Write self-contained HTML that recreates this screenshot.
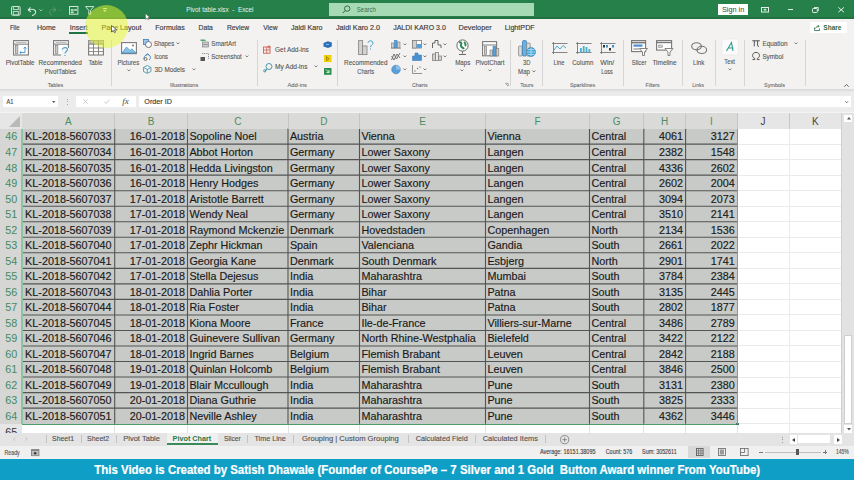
<!DOCTYPE html><html><head><meta charset="utf-8"><style>
*{margin:0;padding:0;box-sizing:border-box}
html,body{width:854px;height:480px;overflow:hidden;background:#f3f3f3;font-family:"Liberation Sans",sans-serif}
body{position:relative}
div{position:absolute}
.t{position:absolute;white-space:nowrap;line-height:1}
svg{position:absolute;overflow:visible}
</style></head><body>
<div style="position:absolute;left:0.00px;top:0.00px;width:854.00px;height:18.60px;background:#26804a"></div>
<div style="position:absolute;left:0.00px;top:16.60px;width:854.00px;height:2.00px;background:#227140"></div>
<svg style="left:10.80px;top:5.60px" width="10" height="10" viewBox="0 0 10 10"><rect x="0.5" y="0.5" width="8.6" height="8.6" rx="0.8" fill="none" stroke="#cfe6d6" stroke-width="1"/><rect x="2.3" y="0.6" width="5" height="3" fill="none" stroke="#cfe6d6" stroke-width="0.9"/><rect x="2.3" y="5.6" width="5" height="3.4" fill="none" stroke="#cfe6d6" stroke-width="0.9"/></svg>
<svg style="left:26.70px;top:5.50px" width="10" height="10" viewBox="0 0 10 10"><path d="M1 4 L3.5 1.3 M1 4 L4 5.8 M1.3 4 C5 2.5 9 3.5 8.6 6.5 C8.3 8.5 6.5 9.3 5 9.6" fill="none" stroke="#cfe6d6" stroke-width="1.1"/></svg>
<svg style="left:38.80px;top:8.70px" width="3.6" height="2.6" viewBox="0 0 3.6 2.6"><path d="M0.5 0.52 L1.80 1.82 L3.10 0.52" fill="none" stroke="#cfe6d6" stroke-width="0.9"/></svg>
<svg style="left:49.00px;top:5.80px" width="8" height="9" viewBox="0 0 8 9"><path d="M7 4 L4.5 1.3 M7 4 L4 5.8 M6.7 4 C3 2.5 0.5 4 0.8 6.5 C1 8.3 2 8.8 3 9" fill="none" stroke="#5a9a70" stroke-width="1"/></svg>
<svg style="left:58.80px;top:8.80px" width="3.4" height="2.4" viewBox="0 0 3.4 2.4"><path d="M0.5 0.48 L1.70 1.68 L2.90 0.48" fill="none" stroke="#4f8f66" stroke-width="0.9"/></svg>
<svg style="left:69.10px;top:5.90px" width="9.4" height="8.7" viewBox="0 0 9.4 8.7"><rect x="0.5" y="0.5" width="8.4" height="7.7" fill="none" stroke="#cfe6d6" stroke-width="1"/><rect x="1.8" y="3.2" width="2.8" height="1.6" fill="#cfe6d6"/><rect x="5.2" y="3.2" width="2.6" height="1.6" fill="#cfe6d6"/><rect x="1.8" y="5.5" width="2.8" height="1.6" fill="#cfe6d6"/></svg>
<svg style="left:84.60px;top:5.90px" width="9.4" height="8.7" viewBox="0 0 9.4 8.7"><path d="M0.6 0.6 L8.8 0.6 L5.6 4.4 L5.6 8.2 L3.8 8.2 L3.8 4.4 Z" fill="none" stroke="#cfe6d6" stroke-width="1"/></svg>
<div style="position:absolute;left:102.80px;top:7.60px;width:4.00px;height:0.80px;background:#cfe6d6"></div>
<svg style="left:103.00px;top:10.00px" width="3.6" height="2" viewBox="0 0 3.6 2"><path d="M0 0 H3.6 L1.8 2 Z" fill="#cfe6d6"/></svg>
<div style="position:absolute;left:329.00px;top:2.60px;width:205.00px;height:13.80px;background:#a6dab5"></div>
<svg style="left:341.50px;top:5.20px" width="9" height="9" viewBox="0 0 9 9"><circle cx="5.2" cy="3.6" r="2.7" fill="none" stroke="#2d5e3c" stroke-width="0.9"/><path d="M3.2 5.6 L0.8 8" stroke="#2d5e3c" stroke-width="1"/></svg>
<div style="position:absolute;left:718.00px;top:4.10px;width:30.30px;height:10.50px;background:#fff"></div>
<svg style="left:761.00px;top:7.00px" width="8" height="5.5" viewBox="0 0 8 5.5"><rect x="0.5" y="0.5" width="7" height="4.5" fill="none" stroke="#e6f0ea" stroke-width="1"/><path d="M2.5 2.7 L5.5 2.7 M4 1.5 L4 4" stroke="#e6f0ea" stroke-width="0.9"/></svg>
<div style="position:absolute;left:787.60px;top:8.80px;width:5.60px;height:0.90px;background:#e6f0ea"></div>
<svg style="left:812.30px;top:7.00px" width="7" height="6" viewBox="0 0 7 6"><rect x="0.5" y="1.5" width="4.8" height="4" rx="0.8" fill="none" stroke="#e6f0ea" stroke-width="1"/><path d="M2 0.5 L6.3 0.5 L6.3 4" fill="none" stroke="#e6f0ea" stroke-width="0.9"/></svg>
<svg style="left:837.80px;top:7.00px" width="6.4" height="5.6" viewBox="0 0 6.4 5.6"><path d="M0.4 0.4 L6 5.2 M6 0.4 L0.4 5.2" stroke="#e6f0ea" stroke-width="1"/></svg>
<div style="position:absolute;left:0.00px;top:18.60px;width:854.00px;height:70.10px;background:#f3f2f0"></div>
<div style="position:absolute;left:69.30px;top:32.20px;width:18.70px;height:1.60px;background:#217346"></div>
<div style="position:absolute;left:810.00px;top:22.00px;width:36.60px;height:11.30px;background:#fff"></div>
<svg style="left:813.80px;top:24.50px" width="6" height="6" viewBox="0 0 6 6"><path d="M0.5 2.5 L0.5 5.5 L5.5 5.5 L5.5 3.5 M1.5 3.5 C2 1.5 3.5 1.2 5 1.2 M3.8 0.2 L5.2 1.2 L3.8 2.3" fill="none" stroke="#2f6b45" stroke-width="0.8"/></svg>
<div style="position:absolute;left:111.20px;top:39.50px;width:0.80px;height:46.50px;background:#d6d6d6"></div>
<div style="position:absolute;left:257.00px;top:39.50px;width:0.80px;height:46.50px;background:#d6d6d6"></div>
<div style="position:absolute;left:337.30px;top:39.50px;width:0.80px;height:46.50px;background:#d6d6d6"></div>
<div style="position:absolute;left:510.10px;top:39.50px;width:0.80px;height:46.50px;background:#d6d6d6"></div>
<div style="position:absolute;left:541.80px;top:39.50px;width:0.80px;height:46.50px;background:#d6d6d6"></div>
<div style="position:absolute;left:622.80px;top:39.50px;width:0.80px;height:46.50px;background:#d6d6d6"></div>
<div style="position:absolute;left:682.40px;top:39.50px;width:0.80px;height:46.50px;background:#d6d6d6"></div>
<div style="position:absolute;left:714.60px;top:39.50px;width:0.80px;height:46.50px;background:#d6d6d6"></div>
<div style="position:absolute;left:744.40px;top:39.50px;width:0.80px;height:46.50px;background:#d6d6d6"></div>
<div style="position:absolute;left:804.90px;top:39.50px;width:0.80px;height:46.50px;background:#d6d6d6"></div>
<svg style="left:126.60px;top:69.10px" width="3.8" height="2.8" viewBox="0 0 3.8 2.8"><path d="M0.5 0.56 L1.90 1.96 L3.30 0.56" fill="none" stroke="#666" stroke-width="0.9"/></svg>
<svg style="left:176.40px;top:42.10px" width="3.8" height="2.8" viewBox="0 0 3.8 2.8"><path d="M0.5 0.56 L1.90 1.96 L3.30 0.56" fill="none" stroke="#666" stroke-width="0.9"/></svg>
<svg style="left:191.50px;top:68.20px" width="3.8" height="2.8" viewBox="0 0 3.8 2.8"><path d="M0.5 0.56 L1.90 1.96 L3.30 0.56" fill="none" stroke="#666" stroke-width="0.9"/></svg>
<svg style="left:244.50px;top:55.20px" width="3.8" height="2.8" viewBox="0 0 3.8 2.8"><path d="M0.5 0.56 L1.90 1.96 L3.30 0.56" fill="none" stroke="#666" stroke-width="0.9"/></svg>
<svg style="left:313.60px;top:65.20px" width="3.8" height="2.8" viewBox="0 0 3.8 2.8"><path d="M0.5 0.56 L1.90 1.96 L3.30 0.56" fill="none" stroke="#666" stroke-width="0.9"/></svg>
<svg style="left:460.10px;top:69.10px" width="3.8" height="2.8" viewBox="0 0 3.8 2.8"><path d="M0.5 0.56 L1.90 1.96 L3.30 0.56" fill="none" stroke="#666" stroke-width="0.9"/></svg>
<svg style="left:487.60px;top:69.10px" width="3.8" height="2.8" viewBox="0 0 3.8 2.8"><path d="M0.5 0.56 L1.90 1.96 L3.30 0.56" fill="none" stroke="#666" stroke-width="0.9"/></svg>
<svg style="left:532.10px;top:69.80px" width="3.8" height="2.8" viewBox="0 0 3.8 2.8"><path d="M0.5 0.56 L1.90 1.96 L3.30 0.56" fill="none" stroke="#666" stroke-width="0.9"/></svg>
<svg style="left:727.60px;top:68.20px" width="3.8" height="2.8" viewBox="0 0 3.8 2.8"><path d="M0.5 0.56 L1.90 1.96 L3.30 0.56" fill="none" stroke="#666" stroke-width="0.9"/></svg>
<svg style="left:793.80px;top:42.20px" width="3.8" height="2.8" viewBox="0 0 3.8 2.8"><path d="M0.5 0.56 L1.90 1.96 L3.30 0.56" fill="none" stroke="#666" stroke-width="0.9"/></svg>
<svg style="left:402.80px;top:42.60px" width="3.8" height="2.8" viewBox="0 0 3.8 2.8"><path d="M0.5 0.56 L1.90 1.96 L3.30 0.56" fill="none" stroke="#666" stroke-width="0.9"/></svg>
<svg style="left:402.80px;top:55.10px" width="3.8" height="2.8" viewBox="0 0 3.8 2.8"><path d="M0.5 0.56 L1.90 1.96 L3.30 0.56" fill="none" stroke="#666" stroke-width="0.9"/></svg>
<svg style="left:402.80px;top:67.90px" width="3.8" height="2.8" viewBox="0 0 3.8 2.8"><path d="M0.5 0.56 L1.90 1.96 L3.30 0.56" fill="none" stroke="#666" stroke-width="0.9"/></svg>
<svg style="left:423.00px;top:42.60px" width="3.8" height="2.8" viewBox="0 0 3.8 2.8"><path d="M0.5 0.56 L1.90 1.96 L3.30 0.56" fill="none" stroke="#666" stroke-width="0.9"/></svg>
<svg style="left:423.00px;top:55.10px" width="3.8" height="2.8" viewBox="0 0 3.8 2.8"><path d="M0.5 0.56 L1.90 1.96 L3.30 0.56" fill="none" stroke="#666" stroke-width="0.9"/></svg>
<svg style="left:423.00px;top:67.90px" width="3.8" height="2.8" viewBox="0 0 3.8 2.8"><path d="M0.5 0.56 L1.90 1.96 L3.30 0.56" fill="none" stroke="#666" stroke-width="0.9"/></svg>
<svg style="left:443.40px;top:42.60px" width="3.8" height="2.8" viewBox="0 0 3.8 2.8"><path d="M0.5 0.56 L1.90 1.96 L3.30 0.56" fill="none" stroke="#666" stroke-width="0.9"/></svg>
<svg style="left:443.40px;top:55.10px" width="3.8" height="2.8" viewBox="0 0 3.8 2.8"><path d="M0.5 0.56 L1.90 1.96 L3.30 0.56" fill="none" stroke="#666" stroke-width="0.9"/></svg>
<svg style="left:12.50px;top:40.00px" width="16" height="15.6" viewBox="0 0 16 15.6"><rect x="0.6" y="0.6" width="14.8" height="14.4" fill="#fff" stroke="#7a7a7a" stroke-width="1.1"/><path d="M0.6 4.2 H15.4" stroke="#7a7a7a" stroke-width="1"/><rect x="2.5" y="1.8" width="11" height="1.4" fill="#bbb"/><rect x="2.3" y="5.6" width="2.6" height="8" fill="#c9c9c9" stroke="#7a7a7a" stroke-width="0.6"/><path d="M7 12.5 L12 12.5 L12 7.3 M10.6 8.6 L12 7 L13.4 8.6 M8.3 11.1 L6.8 12.5 L8.3 13.9" fill="none" stroke="#3c8fd0" stroke-width="0.9"/></svg>
<svg style="left:52.50px;top:40.00px" width="16.4" height="15.6" viewBox="0 0 16.4 15.6"><rect x="0.6" y="0.6" width="14.8" height="14.4" fill="#fff" stroke="#7a7a7a" stroke-width="1.1"/><path d="M0.6 4.2 H15.4" stroke="#7a7a7a" stroke-width="1"/><rect x="2.5" y="1.8" width="11" height="1.4" fill="#bbb"/><rect x="2.3" y="5.6" width="2.6" height="8" fill="#c9c9c9" stroke="#7a7a7a" stroke-width="0.6"/><rect x="8" y="8" width="8.4" height="8" fill="#f3f3f3"/><path d="M9.5 9.5 C9.5 7 14.5 7 14.5 9.6 C14.5 11.5 12 11.5 12 13.5 M12 15 L12 16" fill="none" stroke="#4aa0c8" stroke-width="1.1"/></svg>
<svg style="left:87.60px;top:40.00px" width="16" height="15.6" viewBox="0 0 16 15.6"><rect x="0.6" y="0.6" width="14.8" height="14.4" fill="#fff" stroke="#7a7a7a" stroke-width="1.1"/><rect x="0.6" y="0.6" width="14.8" height="3.6" fill="#b9b9b9"/><path d="M0.6 4.2 H15.4 M0.6 8 H15.4 M0.6 11.6 H15.4 M5.5 0.6 V15 M10.5 0.6 V15" stroke="#7a7a7a" stroke-width="0.9"/></svg>
<svg style="left:120.50px;top:41.50px" width="16" height="12.2" viewBox="0 0 16 12.2"><rect x="0.6" y="0.6" width="14.8" height="11" fill="#fff" stroke="#7a7a7a" stroke-width="1.1"/><path d="M1 11 L5.5 5 L9 8.5 L11 6.8 L15 11 Z" fill="#8ac0e0" stroke="#3c8fd0" stroke-width="0.7"/><circle cx="12" cy="3.5" r="1" fill="#7a7a7a"/></svg>
<svg style="left:357.80px;top:40.20px" width="16" height="15.2" viewBox="0 0 16 15.2"><rect x="0.6" y="0.6" width="4" height="14" fill="#d3d3d3" stroke="#8a8a8a" stroke-width="0.9"/><rect x="4.6" y="6" width="4.4" height="8.6" fill="#d3d3d3" stroke="#8a8a8a" stroke-width="0.9"/><path d="M10 3 C10 0.2 15 0.2 15 3 C15 5 12.5 5 12.5 7.2 M12.5 8.6 L12.5 9.6" fill="none" stroke="#3c9fc8" stroke-width="1"/></svg>
<svg style="left:391.00px;top:39.80px" width="10" height="8.4" viewBox="0 0 10 8.4"><rect x="0.5" y="3" width="2.5" height="5" fill="#d0d0d0" stroke="#777" stroke-width="0.6"/><rect x="3.5" y="0.5" width="2.5" height="7.5" fill="#5aa0d8" stroke="#3c7fb8" stroke-width="0.6"/><rect x="6.5" y="2" width="2.5" height="6" fill="#d0d0d0" stroke="#777" stroke-width="0.6"/><path d="M0 8.2 H10" stroke="#777" stroke-width="0.6"/></svg>
<svg style="left:391.00px;top:52.00px" width="10" height="9" viewBox="0 0 10 9"><path d="M0.5 8 L3 2 L5.5 7 L9 1 M0.5 4 L3 8 L6 2 L9 6" fill="none" stroke="#666" stroke-width="0.9"/></svg>
<svg style="left:391.00px;top:65.00px" width="10" height="9" viewBox="0 0 10 9"><circle cx="5" cy="4.5" r="4.3" fill="#5aa0d8" stroke="#3c7fb8" stroke-width="0.6"/><path d="M5 4.5 L5 0.2 A4.3 4.3 0 0 1 9.3 4.5 Z" fill="#8cc0e8"/></svg>
<svg style="left:411.60px;top:39.80px" width="10" height="8.5" viewBox="0 0 10 8.5"><rect x="0.5" y="0.5" width="9" height="7.5" fill="#fff" stroke="#777" stroke-width="0.8"/><rect x="0.5" y="0.5" width="4" height="7.5" fill="#d0d0d0" stroke="#777" stroke-width="0.6"/><rect x="4.5" y="4" width="5" height="4" fill="#5aa0d8"/></svg>
<svg style="left:411.60px;top:52.00px" width="10" height="9" viewBox="0 0 10 9"><path d="M0.5 8.5 L0.5 4 L3 4 L3 1 L6 1 L6 3 L9.5 3 L9.5 8.5 Z" fill="#4a90d0" stroke="#3c7fb8" stroke-width="0.6"/></svg>
<svg style="left:411.60px;top:65.00px" width="10" height="9" viewBox="0 0 10 9"><path d="M0.5 0 V8.5 H10" fill="none" stroke="#777" stroke-width="0.8"/><circle cx="3" cy="6" r="0.7" fill="#777"/><circle cx="5.5" cy="3.5" r="0.7" fill="#777"/><circle cx="8" cy="2" r="0.7" fill="#777"/></svg>
<svg style="left:431.80px;top:39.80px" width="10" height="8.5" viewBox="0 0 10 8.5"><path d="M0.5 8 V3 H3 V0.5 H6 V5 H9 V8" fill="none" stroke="#666" stroke-width="1"/></svg>
<svg style="left:431.80px;top:52.00px" width="10" height="9" viewBox="0 0 10 9"><rect x="0.5" y="2" width="3" height="6.5" fill="#d0d0d0" stroke="#777" stroke-width="0.7"/><rect x="3.5" y="0.5" width="3" height="8" fill="#e8e8e8" stroke="#777" stroke-width="0.7"/><rect x="6.5" y="4" width="3" height="4.5" fill="#d0d0d0" stroke="#777" stroke-width="0.7"/></svg>
<svg style="left:455.80px;top:39.20px" width="13" height="16.3" viewBox="0 0 13 16.3"><circle cx="6.5" cy="6.5" r="5.6" fill="#fff" stroke="#666" stroke-width="1"/><path d="M3 3.5 C5 2.5 6 4 5 6 C4 8 7 8.5 8 10 M8 3 C9.5 4 10 6 9 7" fill="none" stroke="#2e8a55" stroke-width="2"/><path d="M6.5 12.2 V14.5 M3 15.5 H10" stroke="#666" stroke-width="1"/></svg>
<svg style="left:482.00px;top:40.60px" width="17.2" height="15.4" viewBox="0 0 17.2 15.4"><rect x="0.6" y="0.6" width="14" height="14.2" fill="#fff" stroke="#7a7a7a" stroke-width="1.1"/><path d="M0.6 4 H14.6" stroke="#7a7a7a" stroke-width="1"/><rect x="2.3" y="5.5" width="2.4" height="8" fill="#c9c9c9" stroke="#7a7a7a" stroke-width="0.6"/><rect x="8" y="9" width="2.6" height="6" fill="#d0d0d0" stroke="#777" stroke-width="0.6"/><rect x="11" y="5.5" width="2.8" height="9.5" fill="#5aa0d8" stroke="#3c7fb8" stroke-width="0.6"/><rect x="14.2" y="7.5" width="2.6" height="7.5" fill="#d0d0d0" stroke="#777" stroke-width="0.6"/></svg>
<svg style="left:518.30px;top:39.60px" width="18" height="17" viewBox="0 0 18 17"><rect x="0.6" y="6" width="3.5" height="10" rx="1" fill="#ddd" stroke="#888" stroke-width="0.8"/><rect x="4.5" y="0.6" width="4" height="15.4" rx="1" fill="#6ab0e0" stroke="#3c7fb8" stroke-width="0.8"/><rect x="8.7" y="3" width="3.5" height="13" rx="1" fill="#ddd" stroke="#888" stroke-width="0.8"/><circle cx="13" cy="12" r="4.5" fill="#4aa8d8" stroke="#2f7fb0" stroke-width="0.7"/><path d="M8.5 12 H17.5 M13 7.5 V16.5 M9.5 9.5 H16.5 M9.5 14.5 H16.5" stroke="#d8f0ff" stroke-width="0.6"/></svg>
<svg style="left:552.00px;top:41.50px" width="16" height="12.5" viewBox="0 0 16 12.5"><path d="M1.5 0 V12 M0 1.5 H15.5 M0 10.5 H15.5" stroke="#777" stroke-width="0.9"/><path d="M2 8 L5 4 L8 7 L11 3.5 L14 6" fill="none" stroke="#3c9fc8" stroke-width="0.9"/></svg>
<svg style="left:575.50px;top:41.50px" width="16" height="12.5" viewBox="0 0 16 12.5"><path d="M1.5 0 V12 M0 1.5 H15.5 M0 10.5 H15.5" stroke="#777" stroke-width="0.9"/><rect x="4" y="6" width="1.8" height="4.5" fill="#4ab0d0"/><rect x="6.8" y="4" width="1.8" height="6.5" fill="#4ab0d0"/><rect x="9.6" y="5" width="1.8" height="5.5" fill="#4ab0d0"/><rect x="12.4" y="7" width="1.8" height="3.5" fill="#4ab0d0"/></svg>
<svg style="left:599.80px;top:41.50px" width="16" height="12.5" viewBox="0 0 16 12.5"><path d="M1.5 0 V12 M0 1.5 H15.5 M0 10.5 H15.5" stroke="#777" stroke-width="0.9"/><rect x="3" y="3" width="2" height="2.5" fill="#333"/><rect x="6" y="3" width="2" height="2.5" fill="#3c8fd0"/><rect x="9" y="6" width="2" height="2.5" fill="#333"/><rect x="12" y="3" width="2" height="2.5" fill="#3c8fd0"/></svg>
<svg style="left:630.70px;top:40.00px" width="17" height="16" viewBox="0 0 17 16"><rect x="0.6" y="0.6" width="14" height="11" fill="#fff" stroke="#777" stroke-width="1.1"/><path d="M0.6 2.6 H14.6" stroke="#777" stroke-width="1.6"/><rect x="2.5" y="4.5" width="9" height="2.2" fill="#4a90d0"/><rect x="2.5" y="8" width="6" height="2" fill="#bbb"/><path d="M8.5 8.5 H16.5 L13.5 12 V15.5 H11.5 V12 Z" fill="#fff" stroke="#777" stroke-width="0.9"/></svg>
<svg style="left:656.00px;top:40.00px" width="17.2" height="16" viewBox="0 0 17.2 16"><rect x="0.6" y="0.6" width="15" height="9.5" fill="#fff" stroke="#777" stroke-width="1.1"/><path d="M0.6 2.5 H15.6" stroke="#777" stroke-width="1.4"/><rect x="2.5" y="5" width="4" height="2.5" fill="#ccc" stroke="#888" stroke-width="0.5"/><path d="M9 8.5 H17 L14 12 V15.5 H12 V12 Z" fill="#fff" stroke="#777" stroke-width="0.9"/></svg>
<svg style="left:690.60px;top:41.70px" width="16.4" height="12.3" viewBox="0 0 16.4 12.3"><ellipse cx="5.5" cy="4.3" rx="4.8" ry="3.6" fill="none" stroke="#777" stroke-width="1.1"/><ellipse cx="10.8" cy="7.9" rx="4.8" ry="3.6" fill="none" stroke="#777" stroke-width="1.1"/></svg>
<svg style="left:721.80px;top:38.50px" width="16.2" height="16" viewBox="0 0 16.2 16"><rect x="0" y="0" width="16.2" height="16" fill="#fbfbfb" stroke="#e6e6e6" stroke-width="0.6"/><path d="M4.5 12 L9.5 3.5 L11 12 M6.5 9 H11.5" fill="none" stroke="#2e9a90" stroke-width="1.1"/></svg>
<svg style="left:142.70px;top:39.30px" width="9" height="9" viewBox="0 0 9 9"><rect x="0.5" y="0.5" width="5" height="5" fill="#9cc8ec" stroke="#3c7fb8" stroke-width="0.8"/><circle cx="5.5" cy="5.5" r="3" fill="#fff" stroke="#555" stroke-width="0.8"/></svg>
<svg style="left:143.00px;top:52.70px" width="8.6" height="8" viewBox="0 0 8.6 8"><path d="M1 6 C1 2 4 1 6 2 C8 3 8 6 6 7 M2.5 3 L4.5 0.5 L6.5 2.5" fill="none" stroke="#4a90c0" stroke-width="1"/><circle cx="2.5" cy="6" r="1.5" fill="none" stroke="#555" stroke-width="0.8"/></svg>
<svg style="left:143.00px;top:65.00px" width="8.6" height="8.6" viewBox="0 0 8.6 8.6"><path d="M4.3 0.5 L8 2.5 V6.5 L4.3 8.3 L0.5 6.5 V2.5 Z M0.5 2.5 L4.3 4.5 L8 2.5 M4.3 4.5 V8.3" fill="none" stroke="#3c8fb0" stroke-width="0.8"/></svg>
<svg style="left:200.20px;top:39.30px" width="9" height="8" viewBox="0 0 9 8"><path d="M0.5 0.5 H5 L6 2 H0.5 Z" fill="#4aa870"/><rect x="2.5" y="3" width="6" height="5" fill="#ccc" stroke="#777" stroke-width="0.6"/><path d="M3 5.5 H8" stroke="#777" stroke-width="0.6"/></svg>
<svg style="left:200.20px;top:52.70px" width="9" height="8" viewBox="0 0 9 8"><rect x="0.5" y="4" width="4.5" height="4" fill="#555"/><path d="M2 0.5 H8.5 V6" fill="none" stroke="#777" stroke-width="0.8" stroke-dasharray="1 0.8"/></svg>
<svg style="left:263.00px;top:45.00px" width="9.4" height="8.6" viewBox="0 0 9.4 8.6"><rect x="0.5" y="2" width="6.5" height="6.2" fill="none" stroke="#d06050" stroke-width="0.9"/><path d="M0.5 5 H7 M3.7 2 V8.2 M6 0.2 V3.5 M4.3 1.8 H7.7" stroke="#d06050" stroke-width="0.8"/></svg>
<svg style="left:263.00px;top:62.50px" width="9.4" height="9" viewBox="0 0 9.4 9"><circle cx="6" cy="3.5" r="3" fill="none" stroke="#3c8fa0" stroke-width="0.9"/><path d="M4 6 L1.5 8.5" stroke="#3c8fa0" stroke-width="1"/><circle cx="1.8" cy="7.8" r="1.2" fill="none" stroke="#3c8fa0" stroke-width="0.8"/></svg>
<svg style="left:322.60px;top:40.80px" width="9.3" height="7.1" viewBox="0 0 9.3 7.1"><path d="M0.5 2 L5 0.3 L8.8 1.5 V5.5 L5 7 L0.5 5.5 Z" fill="#2a6fb8"/><path d="M3 3.5 L6 3.5" stroke="#8ac0ff" stroke-width="1"/></svg>
<svg style="left:324.00px;top:54.50px" width="7.5" height="7.1" viewBox="0 0 7.5 7.1"><rect x="0" y="0" width="7.5" height="7.1" fill="#f0d000"/><path d="M2.5 1.5 V5.5 L5 4 Z" fill="none" stroke="#8a7000" stroke-width="0.7"/></svg>
<svg style="left:324.00px;top:67.80px" width="7.5" height="6.8" viewBox="0 0 7.5 6.8"><rect x="0" y="0" width="7.5" height="6.8" fill="#2e9050"/><path d="M2 1.5 L5 4.5 M5 2 V4.5 H2.5" fill="none" stroke="#fff" stroke-width="0.8"/></svg>
<svg style="left:751.70px;top:40.00px" width="8.1" height="6.6" viewBox="0 0 8.1 6.6"><path d="M0.3 0.8 H7.8 M2.3 0.8 V6.4 M5.6 0.8 V5.8 C5.6 6.4 6.4 6.5 7 6.2" fill="none" stroke="#444" stroke-width="0.9"/></svg>
<svg style="left:751.70px;top:52.30px" width="8.1" height="8.2" viewBox="0 0 8.1 8.2"><path d="M0.5 7.6 H2.8 V6.6 C1.2 5.8 0.6 4.6 0.6 3.5 C0.6 1.6 2.2 0.4 4.05 0.4 C5.9 0.4 7.5 1.6 7.5 3.5 C7.5 4.6 6.9 5.8 5.3 6.6 V7.6 H7.6" fill="none" stroke="#444" stroke-width="0.9"/></svg>
<svg style="left:843.50px;top:83.60px" width="5" height="3" viewBox="0 0 5 3"><path d="M0.3 2.7 L2.5 0.5 L4.7 2.7" fill="none" stroke="#555" stroke-width="0.9"/></svg>
<svg style="left:504.80px;top:82.60px" width="3.5" height="3.5" viewBox="0 0 3.5 3.5"><path d="M0.3 0.3 H3.2 V3.2 M0.5 0.5 L3 3" fill="none" stroke="#777" stroke-width="0.6"/></svg>
<div style="position:absolute;left:0.00px;top:88.70px;width:854.00px;height:3.60px;background:linear-gradient(#d8d8d8,#e9e9e9)"></div>
<div style="position:absolute;left:0.00px;top:92.30px;width:854.00px;height:20.20px;background:#ececec"></div>
<div style="position:absolute;left:3.40px;top:95.60px;width:55.00px;height:11.40px;background:#fff"></div>
<svg style="left:51.80px;top:100.50px" width="3.4" height="2" viewBox="0 0 3.4 2"><path d="M0 0 H3.4 L1.7 2 Z" fill="#555"/></svg>
<div style="position:absolute;left:66.60px;top:98.50px;width:0.90px;height:0.90px;background:#aaa"></div>
<div style="position:absolute;left:66.60px;top:101.00px;width:0.90px;height:0.90px;background:#aaa"></div>
<div style="position:absolute;left:66.60px;top:103.50px;width:0.90px;height:0.90px;background:#aaa"></div>
<div style="position:absolute;left:75.80px;top:95.60px;width:60.00px;height:11.40px;background:#fff"></div>
<svg style="left:82.80px;top:99.00px" width="5" height="5" viewBox="0 0 5 5"><path d="M0.3 0.3 L4.7 4.7 M4.7 0.3 L0.3 4.7" stroke="#bdbdbd" stroke-width="0.8"/></svg>
<svg style="left:103.50px;top:99.00px" width="6" height="5" viewBox="0 0 6 5"><path d="M0.3 2.7 L2 4.5 L5.7 0.5" fill="none" stroke="#bdbdbd" stroke-width="0.8"/></svg>
<div class="t" style="left:122.2px;top:96.8px;font-size:9px;font-family:'Liberation Serif',serif;font-style:italic;color:#444">fx</div>
<div style="position:absolute;left:138.60px;top:95.60px;width:712.00px;height:11.40px;background:#fff"></div>
<svg style="left:844.50px;top:100.50px" width="3.4" height="2" viewBox="0 0 3.4 2"><path d="M0.3 0.3 L1.7 1.8 L3.1 0.3" fill="none" stroke="#555" stroke-width="0.8"/></svg>
<div style="position:absolute;left:0.00px;top:112.50px;width:842.00px;height:16.07px;background:#e6e6e6"></div>
<div style="position:absolute;left:22.00px;top:112.50px;width:715.20px;height:16.07px;background:#dadbd9"></div>
<div style="position:absolute;left:0.00px;top:128.57px;width:22.00px;height:304.43px;background:#e6e6e6"></div>
<div style="position:absolute;left:0.00px;top:128.57px;width:22.00px;height:295.07px;background:#d6d7d5"></div>
<div style="position:absolute;left:22.00px;top:128.57px;width:820.00px;height:304.43px;background:#fff"></div>
<div style="position:absolute;left:22.00px;top:128.57px;width:715.20px;height:295.07px;background:#c8cac7"></div>
<div style="position:absolute;left:737.20px;top:143.60px;width:104.50px;height:1.00px;background:#ebebeb"></div>
<div style="position:absolute;left:737.20px;top:159.13px;width:104.50px;height:1.00px;background:#ebebeb"></div>
<div style="position:absolute;left:737.20px;top:174.66px;width:104.50px;height:1.00px;background:#ebebeb"></div>
<div style="position:absolute;left:737.20px;top:190.19px;width:104.50px;height:1.00px;background:#ebebeb"></div>
<div style="position:absolute;left:737.20px;top:205.72px;width:104.50px;height:1.00px;background:#ebebeb"></div>
<div style="position:absolute;left:737.20px;top:221.25px;width:104.50px;height:1.00px;background:#ebebeb"></div>
<div style="position:absolute;left:737.20px;top:236.78px;width:104.50px;height:1.00px;background:#ebebeb"></div>
<div style="position:absolute;left:737.20px;top:252.31px;width:104.50px;height:1.00px;background:#ebebeb"></div>
<div style="position:absolute;left:737.20px;top:267.84px;width:104.50px;height:1.00px;background:#ebebeb"></div>
<div style="position:absolute;left:737.20px;top:283.37px;width:104.50px;height:1.00px;background:#ebebeb"></div>
<div style="position:absolute;left:737.20px;top:298.90px;width:104.50px;height:1.00px;background:#ebebeb"></div>
<div style="position:absolute;left:737.20px;top:314.43px;width:104.50px;height:1.00px;background:#ebebeb"></div>
<div style="position:absolute;left:737.20px;top:329.96px;width:104.50px;height:1.00px;background:#ebebeb"></div>
<div style="position:absolute;left:737.20px;top:345.49px;width:104.50px;height:1.00px;background:#ebebeb"></div>
<div style="position:absolute;left:737.20px;top:361.02px;width:104.50px;height:1.00px;background:#ebebeb"></div>
<div style="position:absolute;left:737.20px;top:376.55px;width:104.50px;height:1.00px;background:#ebebeb"></div>
<div style="position:absolute;left:737.20px;top:392.08px;width:104.50px;height:1.00px;background:#ebebeb"></div>
<div style="position:absolute;left:737.20px;top:407.61px;width:104.50px;height:1.00px;background:#ebebeb"></div>
<div style="position:absolute;left:737.20px;top:423.14px;width:104.50px;height:1.00px;background:#ebebeb"></div>
<div style="position:absolute;left:737.20px;top:438.67px;width:104.50px;height:1.00px;background:#ebebeb"></div>
<div style="position:absolute;left:788.50px;top:128.57px;width:1.00px;height:304.43px;background:#ebebeb"></div>
<div style="position:absolute;left:841.20px;top:128.57px;width:1.00px;height:304.43px;background:#ebebeb"></div>
<div style="position:absolute;left:114.20px;top:423.64px;width:1.00px;height:9.36px;background:#e2e2e2"></div>
<div style="position:absolute;left:187.00px;top:423.64px;width:1.00px;height:9.36px;background:#e2e2e2"></div>
<div style="position:absolute;left:287.50px;top:423.64px;width:1.00px;height:9.36px;background:#e2e2e2"></div>
<div style="position:absolute;left:359.00px;top:423.64px;width:1.00px;height:9.36px;background:#e2e2e2"></div>
<div style="position:absolute;left:485.00px;top:423.64px;width:1.00px;height:9.36px;background:#e2e2e2"></div>
<div style="position:absolute;left:589.00px;top:423.64px;width:1.00px;height:9.36px;background:#e2e2e2"></div>
<div style="position:absolute;left:643.30px;top:423.64px;width:1.00px;height:9.36px;background:#e2e2e2"></div>
<div style="position:absolute;left:685.10px;top:423.64px;width:1.00px;height:9.36px;background:#e2e2e2"></div>
<div style="position:absolute;left:736.70px;top:423.64px;width:1.00px;height:9.36px;background:#e2e2e2"></div>
<svg style="left:0;top:0" width="854" height="480"><path d="M22 144.10 H737.2" stroke="#535554" stroke-width="1.1"/><path d="M22 159.63 H737.2" stroke="#535554" stroke-width="1.1"/><path d="M22 175.16 H737.2" stroke="#535554" stroke-width="1.1"/><path d="M22 190.69 H737.2" stroke="#535554" stroke-width="1.1"/><path d="M22 206.22 H737.2" stroke="#535554" stroke-width="1.1"/><path d="M22 221.75 H737.2" stroke="#535554" stroke-width="1.1"/><path d="M22 237.28 H737.2" stroke="#535554" stroke-width="1.1"/><path d="M22 252.81 H737.2" stroke="#535554" stroke-width="1.1"/><path d="M22 268.34 H737.2" stroke="#535554" stroke-width="1.1"/><path d="M22 283.87 H737.2" stroke="#535554" stroke-width="1.1"/><path d="M22 299.40 H737.2" stroke="#535554" stroke-width="1.1"/><path d="M22 314.93 H737.2" stroke="#535554" stroke-width="1.1"/><path d="M22 330.46 H737.2" stroke="#535554" stroke-width="1.1"/><path d="M22 345.99 H737.2" stroke="#535554" stroke-width="1.1"/><path d="M22 361.52 H737.2" stroke="#535554" stroke-width="1.1"/><path d="M22 377.05 H737.2" stroke="#535554" stroke-width="1.1"/><path d="M22 392.58 H737.2" stroke="#535554" stroke-width="1.1"/><path d="M22 408.11 H737.2" stroke="#535554" stroke-width="1.1"/><path d="M114.70 128.57 V423.64" stroke="#535554" stroke-width="1.1"/><path d="M187.50 128.57 V423.64" stroke="#535554" stroke-width="1.1"/><path d="M288.00 128.57 V423.64" stroke="#535554" stroke-width="1.1"/><path d="M359.50 128.57 V423.64" stroke="#535554" stroke-width="1.1"/><path d="M485.50 128.57 V423.64" stroke="#535554" stroke-width="1.1"/><path d="M589.50 128.57 V423.64" stroke="#535554" stroke-width="1.1"/><path d="M643.80 128.57 V423.64" stroke="#535554" stroke-width="1.1"/><path d="M685.60 128.57 V423.64" stroke="#535554" stroke-width="1.1"/></svg>
<div style="position:absolute;left:114.20px;top:112.50px;width:1.00px;height:16.07px;background:#c6c6c6"></div>
<div style="position:absolute;left:187.00px;top:112.50px;width:1.00px;height:16.07px;background:#c6c6c6"></div>
<div style="position:absolute;left:287.50px;top:112.50px;width:1.00px;height:16.07px;background:#c6c6c6"></div>
<div style="position:absolute;left:359.00px;top:112.50px;width:1.00px;height:16.07px;background:#c6c6c6"></div>
<div style="position:absolute;left:485.00px;top:112.50px;width:1.00px;height:16.07px;background:#c6c6c6"></div>
<div style="position:absolute;left:589.00px;top:112.50px;width:1.00px;height:16.07px;background:#c6c6c6"></div>
<div style="position:absolute;left:643.30px;top:112.50px;width:1.00px;height:16.07px;background:#c6c6c6"></div>
<div style="position:absolute;left:685.10px;top:112.50px;width:1.00px;height:16.07px;background:#c6c6c6"></div>
<div style="position:absolute;left:736.70px;top:112.50px;width:1.00px;height:16.07px;background:#c6c6c6"></div>
<div style="position:absolute;left:788.50px;top:112.50px;width:1.00px;height:16.07px;background:#c6c6c6"></div>
<div style="position:absolute;left:841.20px;top:112.50px;width:1.00px;height:16.07px;background:#c6c6c6"></div>
<div style="position:absolute;left:22.00px;top:423.50px;width:716.00px;height:1.30px;background:#4a9a6a"></div>
<div style="position:absolute;left:736.40px;top:422.80px;width:2.60px;height:2.60px;background:#3a7a55"></div>
<div style="position:absolute;left:736.70px;top:128.57px;width:1.10px;height:295.93px;background:#6aae84"></div>
<div style="position:absolute;left:21.20px;top:128.57px;width:1.40px;height:295.07px;background:#8fc4a2"></div>
<svg style="left:0.00px;top:112.50px" width="22" height="16" viewBox="0 0 22 16"><path d="M20 3 L20 14 L9 14 Z" fill="#b9b9b9"/></svg>
<svg style="left:0;top:0" width="854" height="480" font-family="Liberation Sans"><text x="186.20" y="11.65" font-size="7.40" fill="#e8f2ec" textLength="67.30" lengthAdjust="spacingAndGlyphs">Pivot table.xlsx&#160; -&#160; Excel</text><text x="356.80" y="12.18" font-size="7.20" fill="#3e6a4c" textLength="19.20" lengthAdjust="spacingAndGlyphs">Search</text><text x="722.00" y="12.05" font-size="7.40" fill="#2b4a36" textLength="22.30" lengthAdjust="spacingAndGlyphs">Sign in</text><text x="9.90" y="30.25" font-size="7.40" fill="#3a3a3a" textLength="9.80" lengthAdjust="spacingAndGlyphs" stroke="#3a3a3a" stroke-width="0.15">File</text><text x="37.00" y="30.25" font-size="7.40" fill="#3a3a3a" textLength="18.70" lengthAdjust="spacingAndGlyphs" stroke="#3a3a3a" stroke-width="0.15">Home</text><text x="69.80" y="30.25" font-size="7.40" fill="#3a3a3a" textLength="17.70" lengthAdjust="spacingAndGlyphs" stroke="#3a3a3a" stroke-width="0.15">Insert</text><text x="101.50" y="30.25" font-size="7.40" fill="#3a3a3a" textLength="40.00" lengthAdjust="spacingAndGlyphs" stroke="#3a3a3a" stroke-width="0.15">Page Layout</text><text x="155.30" y="30.25" font-size="7.40" fill="#3a3a3a" textLength="29.50" lengthAdjust="spacingAndGlyphs" stroke="#3a3a3a" stroke-width="0.15">Formulas</text><text x="198.50" y="30.25" font-size="7.40" fill="#3a3a3a" textLength="14.40" lengthAdjust="spacingAndGlyphs" stroke="#3a3a3a" stroke-width="0.15">Data</text><text x="226.90" y="30.25" font-size="7.40" fill="#3a3a3a" textLength="22.20" lengthAdjust="spacingAndGlyphs" stroke="#3a3a3a" stroke-width="0.15">Review</text><text x="263.20" y="30.25" font-size="7.40" fill="#3a3a3a" textLength="14.30" lengthAdjust="spacingAndGlyphs" stroke="#3a3a3a" stroke-width="0.15">View</text><text x="291.10" y="30.25" font-size="7.40" fill="#3a3a3a" textLength="31.40" lengthAdjust="spacingAndGlyphs" stroke="#3a3a3a" stroke-width="0.15">Jaldi Karo</text><text x="336.00" y="30.25" font-size="7.40" fill="#3a3a3a" textLength="44.10" lengthAdjust="spacingAndGlyphs" stroke="#3a3a3a" stroke-width="0.15">Jaldi Karo 2.0</text><text x="393.20" y="30.25" font-size="7.40" fill="#3a3a3a" textLength="52.60" lengthAdjust="spacingAndGlyphs" stroke="#3a3a3a" stroke-width="0.15">JALDI KARO 3.0</text><text x="458.40" y="30.25" font-size="7.40" fill="#3a3a3a" textLength="33.30" lengthAdjust="spacingAndGlyphs" stroke="#3a3a3a" stroke-width="0.15">Developer</text><text x="504.80" y="30.25" font-size="7.40" fill="#3a3a3a" textLength="29.90" lengthAdjust="spacingAndGlyphs" stroke="#3a3a3a" stroke-width="0.15">LightPDF</text><text x="823.30" y="30.42" font-size="7.60" fill="#2f6b45" font-weight="bold" textLength="18.20" lengthAdjust="spacingAndGlyphs">Share</text><text x="47.70" y="86.65" font-size="6.00" fill="#6a6a6a" textLength="15.40" lengthAdjust="spacingAndGlyphs" stroke="#6a6a6a" stroke-width="0.1">Tables</text><text x="169.90" y="86.65" font-size="6.00" fill="#6a6a6a" textLength="28.30" lengthAdjust="spacingAndGlyphs" stroke="#6a6a6a" stroke-width="0.1">Illustrations</text><text x="287.50" y="86.65" font-size="6.00" fill="#6a6a6a" textLength="19.50" lengthAdjust="spacingAndGlyphs" stroke="#6a6a6a" stroke-width="0.1">Add-ins</text><text x="412.10" y="86.65" font-size="6.00" fill="#6a6a6a" textLength="15.40" lengthAdjust="spacingAndGlyphs" stroke="#6a6a6a" stroke-width="0.1">Charts</text><text x="520.30" y="86.65" font-size="6.00" fill="#6a6a6a" textLength="13.10" lengthAdjust="spacingAndGlyphs" stroke="#6a6a6a" stroke-width="0.1">Tours</text><text x="570.00" y="86.65" font-size="6.00" fill="#6a6a6a" textLength="25.20" lengthAdjust="spacingAndGlyphs" stroke="#6a6a6a" stroke-width="0.1">Sparklines</text><text x="645.60" y="86.65" font-size="6.00" fill="#6a6a6a" textLength="14.00" lengthAdjust="spacingAndGlyphs" stroke="#6a6a6a" stroke-width="0.1">Filters</text><text x="692.30" y="86.65" font-size="6.00" fill="#6a6a6a" textLength="11.60" lengthAdjust="spacingAndGlyphs" stroke="#6a6a6a" stroke-width="0.1">Links</text><text x="764.00" y="86.65" font-size="6.00" fill="#6a6a6a" textLength="21.00" lengthAdjust="spacingAndGlyphs" stroke="#6a6a6a" stroke-width="0.1">Symbols</text><text x="5.70" y="64.73" font-size="6.80" fill="#555555" textLength="28.90" lengthAdjust="spacingAndGlyphs" stroke="#555555" stroke-width="0.1">PivotTable</text><text x="38.50" y="64.73" font-size="6.80" fill="#555555" textLength="43.40" lengthAdjust="spacingAndGlyphs" stroke="#555555" stroke-width="0.1">Recommended</text><text x="44.50" y="73.83" font-size="6.80" fill="#555555" textLength="31.70" lengthAdjust="spacingAndGlyphs" stroke="#555555" stroke-width="0.1">PivotTables</text><text x="88.40" y="64.73" font-size="6.80" fill="#555555" textLength="14.10" lengthAdjust="spacingAndGlyphs" stroke="#555555" stroke-width="0.1">Table</text><text x="117.40" y="64.93" font-size="6.80" fill="#555555" textLength="21.80" lengthAdjust="spacingAndGlyphs" stroke="#555555" stroke-width="0.1">Pictures</text><text x="344.10" y="64.93" font-size="6.80" fill="#555555" textLength="43.40" lengthAdjust="spacingAndGlyphs" stroke="#555555" stroke-width="0.1">Recommended</text><text x="357.30" y="73.83" font-size="6.80" fill="#555555" textLength="16.80" lengthAdjust="spacingAndGlyphs" stroke="#555555" stroke-width="0.1">Charts</text><text x="455.20" y="65.43" font-size="6.80" fill="#555555" textLength="15.10" lengthAdjust="spacingAndGlyphs" stroke="#555555" stroke-width="0.1">Maps</text><text x="475.40" y="65.43" font-size="6.80" fill="#555555" textLength="29.00" lengthAdjust="spacingAndGlyphs" stroke="#555555" stroke-width="0.1">PivotChart</text><text x="523.10" y="65.43" font-size="6.80" fill="#555555" textLength="7.40" lengthAdjust="spacingAndGlyphs" stroke="#555555" stroke-width="0.1">3D</text><text x="518.10" y="73.93" font-size="6.80" fill="#555555" textLength="11.90" lengthAdjust="spacingAndGlyphs" stroke="#555555" stroke-width="0.1">Map</text><text x="553.50" y="64.93" font-size="6.80" fill="#555555" textLength="11.00" lengthAdjust="spacingAndGlyphs" stroke="#555555" stroke-width="0.1">Line</text><text x="572.20" y="64.93" font-size="6.80" fill="#555555" textLength="21.10" lengthAdjust="spacingAndGlyphs" stroke="#555555" stroke-width="0.1">Column</text><text x="600.30" y="64.93" font-size="6.80" fill="#555555" textLength="14.00" lengthAdjust="spacingAndGlyphs" stroke="#555555" stroke-width="0.1">Win/</text><text x="601.20" y="73.93" font-size="6.80" fill="#555555" textLength="11.60" lengthAdjust="spacingAndGlyphs" stroke="#555555" stroke-width="0.1">Loss</text><text x="631.80" y="64.93" font-size="6.80" fill="#555555" textLength="14.70" lengthAdjust="spacingAndGlyphs" stroke="#555555" stroke-width="0.1">Slicer</text><text x="652.40" y="64.93" font-size="6.80" fill="#555555" textLength="24.10" lengthAdjust="spacingAndGlyphs" stroke="#555555" stroke-width="0.1">Timeline</text><text x="693.10" y="64.93" font-size="6.80" fill="#555555" textLength="11.20" lengthAdjust="spacingAndGlyphs" stroke="#555555" stroke-width="0.1">Link</text><text x="724.30" y="63.93" font-size="6.80" fill="#555555" textLength="10.60" lengthAdjust="spacingAndGlyphs" stroke="#555555" stroke-width="0.1">Text</text><text x="153.90" y="46.23" font-size="6.80" fill="#555555" textLength="20.30" lengthAdjust="spacingAndGlyphs" stroke="#555555" stroke-width="0.1">Shapes</text><text x="154.20" y="59.23" font-size="6.80" fill="#555555" textLength="13.80" lengthAdjust="spacingAndGlyphs" stroke="#555555" stroke-width="0.1">Icons</text><text x="154.50" y="72.03" font-size="6.80" fill="#555555" textLength="30.40" lengthAdjust="spacingAndGlyphs" stroke="#555555" stroke-width="0.1">3D Models</text><text x="211.30" y="46.23" font-size="6.80" fill="#555555" textLength="24.70" lengthAdjust="spacingAndGlyphs" stroke="#555555" stroke-width="0.1">SmartArt</text><text x="211.30" y="59.23" font-size="6.80" fill="#555555" textLength="30.50" lengthAdjust="spacingAndGlyphs" stroke="#555555" stroke-width="0.1">Screenshot</text><text x="275.10" y="51.93" font-size="6.80" fill="#555555" textLength="33.70" lengthAdjust="spacingAndGlyphs" stroke="#555555" stroke-width="0.1">Get Add-ins</text><text x="275.10" y="69.33" font-size="6.80" fill="#555555" textLength="32.40" lengthAdjust="spacingAndGlyphs" stroke="#555555" stroke-width="0.1">My Add-ins</text><text x="762.40" y="46.23" font-size="6.80" fill="#555555" textLength="25.10" lengthAdjust="spacingAndGlyphs" stroke="#555555" stroke-width="0.1">Equation</text><text x="762.40" y="59.23" font-size="6.80" fill="#555555" textLength="21.00" lengthAdjust="spacingAndGlyphs" stroke="#555555" stroke-width="0.1">Symbol</text><text x="6.50" y="104.15" font-size="7.40" fill="#444" textLength="7.00" lengthAdjust="spacingAndGlyphs" stroke="#444" stroke-width="0.12">A1</text><text x="144.30" y="104.29" font-size="7.80" fill="#333" textLength="27.60" lengthAdjust="spacingAndGlyphs" stroke="#333" stroke-width="0.12">Order ID</text><text x="68.35" y="124.70" font-size="10.00" fill="#4d8c64" text-anchor="middle">A</text><text x="151.10" y="124.70" font-size="10.00" fill="#4d8c64" text-anchor="middle">B</text><text x="237.75" y="124.70" font-size="10.00" fill="#4d8c64" text-anchor="middle">C</text><text x="323.75" y="124.70" font-size="10.00" fill="#4d8c64" text-anchor="middle">D</text><text x="422.50" y="124.70" font-size="10.00" fill="#4d8c64" text-anchor="middle">E</text><text x="537.50" y="124.70" font-size="10.00" fill="#4d8c64" text-anchor="middle">F</text><text x="616.65" y="124.70" font-size="10.00" fill="#4d8c64" text-anchor="middle">G</text><text x="664.70" y="124.70" font-size="10.00" fill="#4d8c64" text-anchor="middle">H</text><text x="711.40" y="124.70" font-size="10.00" fill="#4d8c64" text-anchor="middle">I</text><text x="763.10" y="124.70" font-size="10.00" fill="#444" text-anchor="middle">J</text><text x="815.35" y="124.70" font-size="10.00" fill="#444" text-anchor="middle">K</text><text x="17.20" y="140.47" font-size="10.30" fill="#448a5e" text-anchor="end" textLength="12.01" lengthAdjust="spacingAndGlyphs">46</text><text x="25.10" y="140.47" font-size="10.30" fill="#1a1a1a" textLength="86.47" lengthAdjust="spacingAndGlyphs" stroke="#1a1a1a" stroke-width="0.15">KL-2018-5607033</text><text x="185.00" y="140.47" font-size="10.30" fill="#1a1a1a" text-anchor="end" textLength="55.24" lengthAdjust="spacingAndGlyphs" stroke="#1a1a1a" stroke-width="0.15">16-01-2018</text><text x="189.40" y="140.47" font-size="10.30" fill="#1a1a1a" textLength="67.24" lengthAdjust="spacingAndGlyphs" stroke="#1a1a1a" stroke-width="0.15">Sopoline Noel</text><text x="289.90" y="140.47" font-size="10.30" fill="#1a1a1a" textLength="33.61" lengthAdjust="spacingAndGlyphs" stroke="#1a1a1a" stroke-width="0.15">Austria</text><text x="361.40" y="140.47" font-size="10.30" fill="#1a1a1a" textLength="33.43" lengthAdjust="spacingAndGlyphs" stroke="#1a1a1a" stroke-width="0.15">Vienna</text><text x="487.40" y="140.47" font-size="10.30" fill="#1a1a1a" textLength="33.43" lengthAdjust="spacingAndGlyphs" stroke="#1a1a1a" stroke-width="0.15">Vienna</text><text x="591.40" y="140.47" font-size="10.30" fill="#1a1a1a" textLength="34.81" lengthAdjust="spacingAndGlyphs" stroke="#1a1a1a" stroke-width="0.15">Central</text><text x="683.10" y="140.47" font-size="10.30" fill="#1a1a1a" text-anchor="end" textLength="24.02" lengthAdjust="spacingAndGlyphs" stroke="#1a1a1a" stroke-width="0.15">4061</text><text x="734.70" y="140.47" font-size="10.30" fill="#1a1a1a" text-anchor="end" textLength="24.02" lengthAdjust="spacingAndGlyphs" stroke="#1a1a1a" stroke-width="0.15">3127</text><text x="17.20" y="156.00" font-size="10.30" fill="#448a5e" text-anchor="end" textLength="12.01" lengthAdjust="spacingAndGlyphs">47</text><text x="25.10" y="156.00" font-size="10.30" fill="#1a1a1a" textLength="86.47" lengthAdjust="spacingAndGlyphs" stroke="#1a1a1a" stroke-width="0.15">KL-2018-5607034</text><text x="185.00" y="156.00" font-size="10.30" fill="#1a1a1a" text-anchor="end" textLength="55.24" lengthAdjust="spacingAndGlyphs" stroke="#1a1a1a" stroke-width="0.15">16-01-2018</text><text x="189.40" y="156.00" font-size="10.30" fill="#1a1a1a" textLength="63.64" lengthAdjust="spacingAndGlyphs" stroke="#1a1a1a" stroke-width="0.15">Abbot Horton</text><text x="289.90" y="156.00" font-size="10.30" fill="#1a1a1a" textLength="44.41" lengthAdjust="spacingAndGlyphs" stroke="#1a1a1a" stroke-width="0.15">Germany</text><text x="361.40" y="156.00" font-size="10.30" fill="#1a1a1a" textLength="68.43" lengthAdjust="spacingAndGlyphs" stroke="#1a1a1a" stroke-width="0.15">Lower Saxony</text><text x="487.40" y="156.00" font-size="10.30" fill="#1a1a1a" textLength="36.03" lengthAdjust="spacingAndGlyphs" stroke="#1a1a1a" stroke-width="0.15">Langen</text><text x="591.40" y="156.00" font-size="10.30" fill="#1a1a1a" textLength="34.81" lengthAdjust="spacingAndGlyphs" stroke="#1a1a1a" stroke-width="0.15">Central</text><text x="683.10" y="156.00" font-size="10.30" fill="#1a1a1a" text-anchor="end" textLength="24.02" lengthAdjust="spacingAndGlyphs" stroke="#1a1a1a" stroke-width="0.15">2382</text><text x="734.70" y="156.00" font-size="10.30" fill="#1a1a1a" text-anchor="end" textLength="24.02" lengthAdjust="spacingAndGlyphs" stroke="#1a1a1a" stroke-width="0.15">1548</text><text x="17.20" y="171.53" font-size="10.30" fill="#448a5e" text-anchor="end" textLength="12.01" lengthAdjust="spacingAndGlyphs">48</text><text x="25.10" y="171.53" font-size="10.30" fill="#1a1a1a" textLength="86.47" lengthAdjust="spacingAndGlyphs" stroke="#1a1a1a" stroke-width="0.15">KL-2018-5607035</text><text x="185.00" y="171.53" font-size="10.30" fill="#1a1a1a" text-anchor="end" textLength="55.24" lengthAdjust="spacingAndGlyphs" stroke="#1a1a1a" stroke-width="0.15">16-01-2018</text><text x="189.40" y="171.53" font-size="10.30" fill="#1a1a1a" textLength="83.45" lengthAdjust="spacingAndGlyphs" stroke="#1a1a1a" stroke-width="0.15">Hedda Livingston</text><text x="289.90" y="171.53" font-size="10.30" fill="#1a1a1a" textLength="44.41" lengthAdjust="spacingAndGlyphs" stroke="#1a1a1a" stroke-width="0.15">Germany</text><text x="361.40" y="171.53" font-size="10.30" fill="#1a1a1a" textLength="68.43" lengthAdjust="spacingAndGlyphs" stroke="#1a1a1a" stroke-width="0.15">Lower Saxony</text><text x="487.40" y="171.53" font-size="10.30" fill="#1a1a1a" textLength="36.03" lengthAdjust="spacingAndGlyphs" stroke="#1a1a1a" stroke-width="0.15">Langen</text><text x="591.40" y="171.53" font-size="10.30" fill="#1a1a1a" textLength="34.81" lengthAdjust="spacingAndGlyphs" stroke="#1a1a1a" stroke-width="0.15">Central</text><text x="683.10" y="171.53" font-size="10.30" fill="#1a1a1a" text-anchor="end" textLength="24.02" lengthAdjust="spacingAndGlyphs" stroke="#1a1a1a" stroke-width="0.15">4336</text><text x="734.70" y="171.53" font-size="10.30" fill="#1a1a1a" text-anchor="end" textLength="24.02" lengthAdjust="spacingAndGlyphs" stroke="#1a1a1a" stroke-width="0.15">2602</text><text x="17.20" y="187.06" font-size="10.30" fill="#448a5e" text-anchor="end" textLength="12.01" lengthAdjust="spacingAndGlyphs">49</text><text x="25.10" y="187.06" font-size="10.30" fill="#1a1a1a" textLength="86.47" lengthAdjust="spacingAndGlyphs" stroke="#1a1a1a" stroke-width="0.15">KL-2018-5607036</text><text x="185.00" y="187.06" font-size="10.30" fill="#1a1a1a" text-anchor="end" textLength="55.24" lengthAdjust="spacingAndGlyphs" stroke="#1a1a1a" stroke-width="0.15">16-01-2018</text><text x="189.40" y="187.06" font-size="10.30" fill="#1a1a1a" textLength="69.03" lengthAdjust="spacingAndGlyphs" stroke="#1a1a1a" stroke-width="0.15">Henry Hodges</text><text x="289.90" y="187.06" font-size="10.30" fill="#1a1a1a" textLength="44.41" lengthAdjust="spacingAndGlyphs" stroke="#1a1a1a" stroke-width="0.15">Germany</text><text x="361.40" y="187.06" font-size="10.30" fill="#1a1a1a" textLength="68.43" lengthAdjust="spacingAndGlyphs" stroke="#1a1a1a" stroke-width="0.15">Lower Saxony</text><text x="487.40" y="187.06" font-size="10.30" fill="#1a1a1a" textLength="36.03" lengthAdjust="spacingAndGlyphs" stroke="#1a1a1a" stroke-width="0.15">Langen</text><text x="591.40" y="187.06" font-size="10.30" fill="#1a1a1a" textLength="34.81" lengthAdjust="spacingAndGlyphs" stroke="#1a1a1a" stroke-width="0.15">Central</text><text x="683.10" y="187.06" font-size="10.30" fill="#1a1a1a" text-anchor="end" textLength="24.02" lengthAdjust="spacingAndGlyphs" stroke="#1a1a1a" stroke-width="0.15">2602</text><text x="734.70" y="187.06" font-size="10.30" fill="#1a1a1a" text-anchor="end" textLength="24.02" lengthAdjust="spacingAndGlyphs" stroke="#1a1a1a" stroke-width="0.15">2004</text><text x="17.20" y="202.59" font-size="10.30" fill="#448a5e" text-anchor="end" textLength="12.01" lengthAdjust="spacingAndGlyphs">50</text><text x="25.10" y="202.59" font-size="10.30" fill="#1a1a1a" textLength="86.47" lengthAdjust="spacingAndGlyphs" stroke="#1a1a1a" stroke-width="0.15">KL-2018-5607037</text><text x="185.00" y="202.59" font-size="10.30" fill="#1a1a1a" text-anchor="end" textLength="55.24" lengthAdjust="spacingAndGlyphs" stroke="#1a1a1a" stroke-width="0.15">17-01-2018</text><text x="189.40" y="202.59" font-size="10.30" fill="#1a1a1a" textLength="74.42" lengthAdjust="spacingAndGlyphs" stroke="#1a1a1a" stroke-width="0.15">Aristotle Barrett</text><text x="289.90" y="202.59" font-size="10.30" fill="#1a1a1a" textLength="44.41" lengthAdjust="spacingAndGlyphs" stroke="#1a1a1a" stroke-width="0.15">Germany</text><text x="361.40" y="202.59" font-size="10.30" fill="#1a1a1a" textLength="68.43" lengthAdjust="spacingAndGlyphs" stroke="#1a1a1a" stroke-width="0.15">Lower Saxony</text><text x="487.40" y="202.59" font-size="10.30" fill="#1a1a1a" textLength="36.03" lengthAdjust="spacingAndGlyphs" stroke="#1a1a1a" stroke-width="0.15">Langen</text><text x="591.40" y="202.59" font-size="10.30" fill="#1a1a1a" textLength="34.81" lengthAdjust="spacingAndGlyphs" stroke="#1a1a1a" stroke-width="0.15">Central</text><text x="683.10" y="202.59" font-size="10.30" fill="#1a1a1a" text-anchor="end" textLength="24.02" lengthAdjust="spacingAndGlyphs" stroke="#1a1a1a" stroke-width="0.15">3094</text><text x="734.70" y="202.59" font-size="10.30" fill="#1a1a1a" text-anchor="end" textLength="24.02" lengthAdjust="spacingAndGlyphs" stroke="#1a1a1a" stroke-width="0.15">2073</text><text x="17.20" y="218.12" font-size="10.30" fill="#448a5e" text-anchor="end" textLength="12.01" lengthAdjust="spacingAndGlyphs">51</text><text x="25.10" y="218.12" font-size="10.30" fill="#1a1a1a" textLength="86.47" lengthAdjust="spacingAndGlyphs" stroke="#1a1a1a" stroke-width="0.15">KL-2018-5607038</text><text x="185.00" y="218.12" font-size="10.30" fill="#1a1a1a" text-anchor="end" textLength="55.24" lengthAdjust="spacingAndGlyphs" stroke="#1a1a1a" stroke-width="0.15">17-01-2018</text><text x="189.40" y="218.12" font-size="10.30" fill="#1a1a1a" textLength="58.63" lengthAdjust="spacingAndGlyphs" stroke="#1a1a1a" stroke-width="0.15">Wendy Neal</text><text x="289.90" y="218.12" font-size="10.30" fill="#1a1a1a" textLength="44.41" lengthAdjust="spacingAndGlyphs" stroke="#1a1a1a" stroke-width="0.15">Germany</text><text x="361.40" y="218.12" font-size="10.30" fill="#1a1a1a" textLength="68.43" lengthAdjust="spacingAndGlyphs" stroke="#1a1a1a" stroke-width="0.15">Lower Saxony</text><text x="487.40" y="218.12" font-size="10.30" fill="#1a1a1a" textLength="36.03" lengthAdjust="spacingAndGlyphs" stroke="#1a1a1a" stroke-width="0.15">Langen</text><text x="591.40" y="218.12" font-size="10.30" fill="#1a1a1a" textLength="34.81" lengthAdjust="spacingAndGlyphs" stroke="#1a1a1a" stroke-width="0.15">Central</text><text x="683.10" y="218.12" font-size="10.30" fill="#1a1a1a" text-anchor="end" textLength="24.02" lengthAdjust="spacingAndGlyphs" stroke="#1a1a1a" stroke-width="0.15">3510</text><text x="734.70" y="218.12" font-size="10.30" fill="#1a1a1a" text-anchor="end" textLength="24.02" lengthAdjust="spacingAndGlyphs" stroke="#1a1a1a" stroke-width="0.15">2141</text><text x="17.20" y="233.65" font-size="10.30" fill="#448a5e" text-anchor="end" textLength="12.01" lengthAdjust="spacingAndGlyphs">52</text><text x="25.10" y="233.65" font-size="10.30" fill="#1a1a1a" textLength="86.47" lengthAdjust="spacingAndGlyphs" stroke="#1a1a1a" stroke-width="0.15">KL-2018-5607039</text><text x="185.00" y="233.65" font-size="10.30" fill="#1a1a1a" text-anchor="end" textLength="55.24" lengthAdjust="spacingAndGlyphs" stroke="#1a1a1a" stroke-width="0.15">17-01-2018</text><text x="189.40" y="233.65" font-size="10.30" fill="#1a1a1a" textLength="94.83" lengthAdjust="spacingAndGlyphs" stroke="#1a1a1a" stroke-width="0.15">Raymond Mckenzie</text><text x="289.90" y="233.65" font-size="10.30" fill="#1a1a1a" textLength="43.81" lengthAdjust="spacingAndGlyphs" stroke="#1a1a1a" stroke-width="0.15">Denmark</text><text x="361.40" y="233.65" font-size="10.30" fill="#1a1a1a" textLength="63.64" lengthAdjust="spacingAndGlyphs" stroke="#1a1a1a" stroke-width="0.15">Hovedstaden</text><text x="487.40" y="233.65" font-size="10.30" fill="#1a1a1a" textLength="61.85" lengthAdjust="spacingAndGlyphs" stroke="#1a1a1a" stroke-width="0.15">Copenhagen</text><text x="591.40" y="233.65" font-size="10.30" fill="#1a1a1a" textLength="26.41" lengthAdjust="spacingAndGlyphs" stroke="#1a1a1a" stroke-width="0.15">North</text><text x="683.10" y="233.65" font-size="10.30" fill="#1a1a1a" text-anchor="end" textLength="24.02" lengthAdjust="spacingAndGlyphs" stroke="#1a1a1a" stroke-width="0.15">2134</text><text x="734.70" y="233.65" font-size="10.30" fill="#1a1a1a" text-anchor="end" textLength="24.02" lengthAdjust="spacingAndGlyphs" stroke="#1a1a1a" stroke-width="0.15">1536</text><text x="17.20" y="249.18" font-size="10.30" fill="#448a5e" text-anchor="end" textLength="12.01" lengthAdjust="spacingAndGlyphs">53</text><text x="25.10" y="249.18" font-size="10.30" fill="#1a1a1a" textLength="86.47" lengthAdjust="spacingAndGlyphs" stroke="#1a1a1a" stroke-width="0.15">KL-2018-5607040</text><text x="185.00" y="249.18" font-size="10.30" fill="#1a1a1a" text-anchor="end" textLength="55.24" lengthAdjust="spacingAndGlyphs" stroke="#1a1a1a" stroke-width="0.15">17-01-2018</text><text x="189.40" y="249.18" font-size="10.30" fill="#1a1a1a" textLength="73.22" lengthAdjust="spacingAndGlyphs" stroke="#1a1a1a" stroke-width="0.15">Zephr Hickman</text><text x="289.90" y="249.18" font-size="10.30" fill="#1a1a1a" textLength="27.62" lengthAdjust="spacingAndGlyphs" stroke="#1a1a1a" stroke-width="0.15">Spain</text><text x="361.40" y="249.18" font-size="10.30" fill="#1a1a1a" textLength="52.64" lengthAdjust="spacingAndGlyphs" stroke="#1a1a1a" stroke-width="0.15">Valenciana</text><text x="487.40" y="249.18" font-size="10.30" fill="#1a1a1a" textLength="34.82" lengthAdjust="spacingAndGlyphs" stroke="#1a1a1a" stroke-width="0.15">Gandia</text><text x="591.40" y="249.18" font-size="10.30" fill="#1a1a1a" textLength="28.22" lengthAdjust="spacingAndGlyphs" stroke="#1a1a1a" stroke-width="0.15">South</text><text x="683.10" y="249.18" font-size="10.30" fill="#1a1a1a" text-anchor="end" textLength="24.02" lengthAdjust="spacingAndGlyphs" stroke="#1a1a1a" stroke-width="0.15">2661</text><text x="734.70" y="249.18" font-size="10.30" fill="#1a1a1a" text-anchor="end" textLength="24.02" lengthAdjust="spacingAndGlyphs" stroke="#1a1a1a" stroke-width="0.15">2022</text><text x="17.20" y="264.71" font-size="10.30" fill="#448a5e" text-anchor="end" textLength="12.01" lengthAdjust="spacingAndGlyphs">54</text><text x="25.10" y="264.71" font-size="10.30" fill="#1a1a1a" textLength="86.47" lengthAdjust="spacingAndGlyphs" stroke="#1a1a1a" stroke-width="0.15">KL-2018-5607041</text><text x="185.00" y="264.71" font-size="10.30" fill="#1a1a1a" text-anchor="end" textLength="55.24" lengthAdjust="spacingAndGlyphs" stroke="#1a1a1a" stroke-width="0.15">17-01-2018</text><text x="189.40" y="264.71" font-size="10.30" fill="#1a1a1a" textLength="66.64" lengthAdjust="spacingAndGlyphs" stroke="#1a1a1a" stroke-width="0.15">Georgia Kane</text><text x="289.90" y="264.71" font-size="10.30" fill="#1a1a1a" textLength="43.81" lengthAdjust="spacingAndGlyphs" stroke="#1a1a1a" stroke-width="0.15">Denmark</text><text x="361.40" y="264.71" font-size="10.30" fill="#1a1a1a" textLength="75.03" lengthAdjust="spacingAndGlyphs" stroke="#1a1a1a" stroke-width="0.15">South Denmark</text><text x="487.40" y="264.71" font-size="10.30" fill="#1a1a1a" textLength="36.62" lengthAdjust="spacingAndGlyphs" stroke="#1a1a1a" stroke-width="0.15">Esbjerg</text><text x="591.40" y="264.71" font-size="10.30" fill="#1a1a1a" textLength="26.41" lengthAdjust="spacingAndGlyphs" stroke="#1a1a1a" stroke-width="0.15">North</text><text x="683.10" y="264.71" font-size="10.30" fill="#1a1a1a" text-anchor="end" textLength="24.02" lengthAdjust="spacingAndGlyphs" stroke="#1a1a1a" stroke-width="0.15">2901</text><text x="734.70" y="264.71" font-size="10.30" fill="#1a1a1a" text-anchor="end" textLength="24.02" lengthAdjust="spacingAndGlyphs" stroke="#1a1a1a" stroke-width="0.15">1741</text><text x="17.20" y="280.24" font-size="10.30" fill="#448a5e" text-anchor="end" textLength="12.01" lengthAdjust="spacingAndGlyphs">55</text><text x="25.10" y="280.24" font-size="10.30" fill="#1a1a1a" textLength="86.47" lengthAdjust="spacingAndGlyphs" stroke="#1a1a1a" stroke-width="0.15">KL-2018-5607042</text><text x="185.00" y="280.24" font-size="10.30" fill="#1a1a1a" text-anchor="end" textLength="55.24" lengthAdjust="spacingAndGlyphs" stroke="#1a1a1a" stroke-width="0.15">17-01-2018</text><text x="189.40" y="280.24" font-size="10.30" fill="#1a1a1a" textLength="69.03" lengthAdjust="spacingAndGlyphs" stroke="#1a1a1a" stroke-width="0.15">Stella Dejesus</text><text x="289.90" y="280.24" font-size="10.30" fill="#1a1a1a" textLength="23.42" lengthAdjust="spacingAndGlyphs" stroke="#1a1a1a" stroke-width="0.15">India</text><text x="361.40" y="280.24" font-size="10.30" fill="#1a1a1a" textLength="60.62" lengthAdjust="spacingAndGlyphs" stroke="#1a1a1a" stroke-width="0.15">Maharashtra</text><text x="487.40" y="280.24" font-size="10.30" fill="#1a1a1a" textLength="38.41" lengthAdjust="spacingAndGlyphs" stroke="#1a1a1a" stroke-width="0.15">Mumbai</text><text x="591.40" y="280.24" font-size="10.30" fill="#1a1a1a" textLength="28.22" lengthAdjust="spacingAndGlyphs" stroke="#1a1a1a" stroke-width="0.15">South</text><text x="683.10" y="280.24" font-size="10.30" fill="#1a1a1a" text-anchor="end" textLength="24.02" lengthAdjust="spacingAndGlyphs" stroke="#1a1a1a" stroke-width="0.15">3784</text><text x="734.70" y="280.24" font-size="10.30" fill="#1a1a1a" text-anchor="end" textLength="24.02" lengthAdjust="spacingAndGlyphs" stroke="#1a1a1a" stroke-width="0.15">2384</text><text x="17.20" y="295.77" font-size="10.30" fill="#448a5e" text-anchor="end" textLength="12.01" lengthAdjust="spacingAndGlyphs">56</text><text x="25.10" y="295.77" font-size="10.30" fill="#1a1a1a" textLength="86.47" lengthAdjust="spacingAndGlyphs" stroke="#1a1a1a" stroke-width="0.15">KL-2018-5607043</text><text x="185.00" y="295.77" font-size="10.30" fill="#1a1a1a" text-anchor="end" textLength="55.24" lengthAdjust="spacingAndGlyphs" stroke="#1a1a1a" stroke-width="0.15">18-01-2018</text><text x="189.40" y="295.77" font-size="10.30" fill="#1a1a1a" textLength="63.02" lengthAdjust="spacingAndGlyphs" stroke="#1a1a1a" stroke-width="0.15">Dahlia Porter</text><text x="289.90" y="295.77" font-size="10.30" fill="#1a1a1a" textLength="23.42" lengthAdjust="spacingAndGlyphs" stroke="#1a1a1a" stroke-width="0.15">India</text><text x="361.40" y="295.77" font-size="10.30" fill="#1a1a1a" textLength="25.21" lengthAdjust="spacingAndGlyphs" stroke="#1a1a1a" stroke-width="0.15">Bihar</text><text x="487.40" y="295.77" font-size="10.30" fill="#1a1a1a" textLength="28.22" lengthAdjust="spacingAndGlyphs" stroke="#1a1a1a" stroke-width="0.15">Patna</text><text x="591.40" y="295.77" font-size="10.30" fill="#1a1a1a" textLength="28.22" lengthAdjust="spacingAndGlyphs" stroke="#1a1a1a" stroke-width="0.15">South</text><text x="683.10" y="295.77" font-size="10.30" fill="#1a1a1a" text-anchor="end" textLength="24.02" lengthAdjust="spacingAndGlyphs" stroke="#1a1a1a" stroke-width="0.15">3135</text><text x="734.70" y="295.77" font-size="10.30" fill="#1a1a1a" text-anchor="end" textLength="24.02" lengthAdjust="spacingAndGlyphs" stroke="#1a1a1a" stroke-width="0.15">2445</text><text x="17.20" y="311.30" font-size="10.30" fill="#448a5e" text-anchor="end" textLength="12.01" lengthAdjust="spacingAndGlyphs">57</text><text x="25.10" y="311.30" font-size="10.30" fill="#1a1a1a" textLength="86.47" lengthAdjust="spacingAndGlyphs" stroke="#1a1a1a" stroke-width="0.15">KL-2018-5607044</text><text x="185.00" y="311.30" font-size="10.30" fill="#1a1a1a" text-anchor="end" textLength="55.24" lengthAdjust="spacingAndGlyphs" stroke="#1a1a1a" stroke-width="0.15">18-01-2018</text><text x="189.40" y="311.30" font-size="10.30" fill="#1a1a1a" textLength="49.81" lengthAdjust="spacingAndGlyphs" stroke="#1a1a1a" stroke-width="0.15">Ria Foster</text><text x="289.90" y="311.30" font-size="10.30" fill="#1a1a1a" textLength="23.42" lengthAdjust="spacingAndGlyphs" stroke="#1a1a1a" stroke-width="0.15">India</text><text x="361.40" y="311.30" font-size="10.30" fill="#1a1a1a" textLength="25.21" lengthAdjust="spacingAndGlyphs" stroke="#1a1a1a" stroke-width="0.15">Bihar</text><text x="487.40" y="311.30" font-size="10.30" fill="#1a1a1a" textLength="28.22" lengthAdjust="spacingAndGlyphs" stroke="#1a1a1a" stroke-width="0.15">Patna</text><text x="591.40" y="311.30" font-size="10.30" fill="#1a1a1a" textLength="28.22" lengthAdjust="spacingAndGlyphs" stroke="#1a1a1a" stroke-width="0.15">South</text><text x="683.10" y="311.30" font-size="10.30" fill="#1a1a1a" text-anchor="end" textLength="24.02" lengthAdjust="spacingAndGlyphs" stroke="#1a1a1a" stroke-width="0.15">2802</text><text x="734.70" y="311.30" font-size="10.30" fill="#1a1a1a" text-anchor="end" textLength="24.02" lengthAdjust="spacingAndGlyphs" stroke="#1a1a1a" stroke-width="0.15">1877</text><text x="17.20" y="326.83" font-size="10.30" fill="#448a5e" text-anchor="end" textLength="12.01" lengthAdjust="spacingAndGlyphs">58</text><text x="25.10" y="326.83" font-size="10.30" fill="#1a1a1a" textLength="86.47" lengthAdjust="spacingAndGlyphs" stroke="#1a1a1a" stroke-width="0.15">KL-2018-5607045</text><text x="185.00" y="326.83" font-size="10.30" fill="#1a1a1a" text-anchor="end" textLength="55.24" lengthAdjust="spacingAndGlyphs" stroke="#1a1a1a" stroke-width="0.15">18-01-2018</text><text x="189.40" y="326.83" font-size="10.30" fill="#1a1a1a" textLength="61.23" lengthAdjust="spacingAndGlyphs" stroke="#1a1a1a" stroke-width="0.15">Kiona Moore</text><text x="289.90" y="326.83" font-size="10.30" fill="#1a1a1a" textLength="33.61" lengthAdjust="spacingAndGlyphs" stroke="#1a1a1a" stroke-width="0.15">France</text><text x="361.40" y="326.83" font-size="10.30" fill="#1a1a1a" textLength="64.22" lengthAdjust="spacingAndGlyphs" stroke="#1a1a1a" stroke-width="0.15">Ile-de-France</text><text x="487.40" y="326.83" font-size="10.30" fill="#1a1a1a" textLength="84.41" lengthAdjust="spacingAndGlyphs" stroke="#1a1a1a" stroke-width="0.15">Villiers-sur-Marne</text><text x="591.40" y="326.83" font-size="10.30" fill="#1a1a1a" textLength="34.81" lengthAdjust="spacingAndGlyphs" stroke="#1a1a1a" stroke-width="0.15">Central</text><text x="683.10" y="326.83" font-size="10.30" fill="#1a1a1a" text-anchor="end" textLength="24.02" lengthAdjust="spacingAndGlyphs" stroke="#1a1a1a" stroke-width="0.15">3486</text><text x="734.70" y="326.83" font-size="10.30" fill="#1a1a1a" text-anchor="end" textLength="24.02" lengthAdjust="spacingAndGlyphs" stroke="#1a1a1a" stroke-width="0.15">2789</text><text x="17.20" y="342.36" font-size="10.30" fill="#448a5e" text-anchor="end" textLength="12.01" lengthAdjust="spacingAndGlyphs">59</text><text x="25.10" y="342.36" font-size="10.30" fill="#1a1a1a" textLength="86.47" lengthAdjust="spacingAndGlyphs" stroke="#1a1a1a" stroke-width="0.15">KL-2018-5607046</text><text x="185.00" y="342.36" font-size="10.30" fill="#1a1a1a" text-anchor="end" textLength="55.24" lengthAdjust="spacingAndGlyphs" stroke="#1a1a1a" stroke-width="0.15">18-01-2018</text><text x="189.40" y="342.36" font-size="10.30" fill="#1a1a1a" textLength="90.65" lengthAdjust="spacingAndGlyphs" stroke="#1a1a1a" stroke-width="0.15">Guinevere Sullivan</text><text x="289.90" y="342.36" font-size="10.30" fill="#1a1a1a" textLength="44.41" lengthAdjust="spacingAndGlyphs" stroke="#1a1a1a" stroke-width="0.15">Germany</text><text x="361.40" y="342.36" font-size="10.30" fill="#1a1a1a" textLength="114.45" lengthAdjust="spacingAndGlyphs" stroke="#1a1a1a" stroke-width="0.15">North Rhine-Westphalia</text><text x="487.40" y="342.36" font-size="10.30" fill="#1a1a1a" textLength="41.43" lengthAdjust="spacingAndGlyphs" stroke="#1a1a1a" stroke-width="0.15">Bielefeld</text><text x="591.40" y="342.36" font-size="10.30" fill="#1a1a1a" textLength="34.81" lengthAdjust="spacingAndGlyphs" stroke="#1a1a1a" stroke-width="0.15">Central</text><text x="683.10" y="342.36" font-size="10.30" fill="#1a1a1a" text-anchor="end" textLength="24.02" lengthAdjust="spacingAndGlyphs" stroke="#1a1a1a" stroke-width="0.15">3422</text><text x="734.70" y="342.36" font-size="10.30" fill="#1a1a1a" text-anchor="end" textLength="24.02" lengthAdjust="spacingAndGlyphs" stroke="#1a1a1a" stroke-width="0.15">2122</text><text x="17.20" y="357.89" font-size="10.30" fill="#448a5e" text-anchor="end" textLength="12.01" lengthAdjust="spacingAndGlyphs">60</text><text x="25.10" y="357.89" font-size="10.30" fill="#1a1a1a" textLength="86.47" lengthAdjust="spacingAndGlyphs" stroke="#1a1a1a" stroke-width="0.15">KL-2018-5607047</text><text x="185.00" y="357.89" font-size="10.30" fill="#1a1a1a" text-anchor="end" textLength="55.24" lengthAdjust="spacingAndGlyphs" stroke="#1a1a1a" stroke-width="0.15">18-01-2018</text><text x="189.40" y="357.89" font-size="10.30" fill="#1a1a1a" textLength="64.23" lengthAdjust="spacingAndGlyphs" stroke="#1a1a1a" stroke-width="0.15">Ingrid Barnes</text><text x="289.90" y="357.89" font-size="10.30" fill="#1a1a1a" textLength="39.02" lengthAdjust="spacingAndGlyphs" stroke="#1a1a1a" stroke-width="0.15">Belgium</text><text x="361.40" y="357.89" font-size="10.30" fill="#1a1a1a" textLength="78.63" lengthAdjust="spacingAndGlyphs" stroke="#1a1a1a" stroke-width="0.15">Flemish Brabant</text><text x="487.40" y="357.89" font-size="10.30" fill="#1a1a1a" textLength="35.43" lengthAdjust="spacingAndGlyphs" stroke="#1a1a1a" stroke-width="0.15">Leuven</text><text x="591.40" y="357.89" font-size="10.30" fill="#1a1a1a" textLength="34.81" lengthAdjust="spacingAndGlyphs" stroke="#1a1a1a" stroke-width="0.15">Central</text><text x="683.10" y="357.89" font-size="10.30" fill="#1a1a1a" text-anchor="end" textLength="24.02" lengthAdjust="spacingAndGlyphs" stroke="#1a1a1a" stroke-width="0.15">2842</text><text x="734.70" y="357.89" font-size="10.30" fill="#1a1a1a" text-anchor="end" textLength="24.02" lengthAdjust="spacingAndGlyphs" stroke="#1a1a1a" stroke-width="0.15">2188</text><text x="17.20" y="373.42" font-size="10.30" fill="#448a5e" text-anchor="end" textLength="12.01" lengthAdjust="spacingAndGlyphs">61</text><text x="25.10" y="373.42" font-size="10.30" fill="#1a1a1a" textLength="86.47" lengthAdjust="spacingAndGlyphs" stroke="#1a1a1a" stroke-width="0.15">KL-2018-5607048</text><text x="185.00" y="373.42" font-size="10.30" fill="#1a1a1a" text-anchor="end" textLength="55.24" lengthAdjust="spacingAndGlyphs" stroke="#1a1a1a" stroke-width="0.15">19-01-2018</text><text x="189.40" y="373.42" font-size="10.30" fill="#1a1a1a" textLength="82.84" lengthAdjust="spacingAndGlyphs" stroke="#1a1a1a" stroke-width="0.15">Quinlan Holcomb</text><text x="289.90" y="373.42" font-size="10.30" fill="#1a1a1a" textLength="39.02" lengthAdjust="spacingAndGlyphs" stroke="#1a1a1a" stroke-width="0.15">Belgium</text><text x="361.40" y="373.42" font-size="10.30" fill="#1a1a1a" textLength="78.63" lengthAdjust="spacingAndGlyphs" stroke="#1a1a1a" stroke-width="0.15">Flemish Brabant</text><text x="487.40" y="373.42" font-size="10.30" fill="#1a1a1a" textLength="35.43" lengthAdjust="spacingAndGlyphs" stroke="#1a1a1a" stroke-width="0.15">Leuven</text><text x="591.40" y="373.42" font-size="10.30" fill="#1a1a1a" textLength="34.81" lengthAdjust="spacingAndGlyphs" stroke="#1a1a1a" stroke-width="0.15">Central</text><text x="683.10" y="373.42" font-size="10.30" fill="#1a1a1a" text-anchor="end" textLength="24.02" lengthAdjust="spacingAndGlyphs" stroke="#1a1a1a" stroke-width="0.15">3846</text><text x="734.70" y="373.42" font-size="10.30" fill="#1a1a1a" text-anchor="end" textLength="24.02" lengthAdjust="spacingAndGlyphs" stroke="#1a1a1a" stroke-width="0.15">2500</text><text x="17.20" y="388.95" font-size="10.30" fill="#448a5e" text-anchor="end" textLength="12.01" lengthAdjust="spacingAndGlyphs">62</text><text x="25.10" y="388.95" font-size="10.30" fill="#1a1a1a" textLength="86.47" lengthAdjust="spacingAndGlyphs" stroke="#1a1a1a" stroke-width="0.15">KL-2018-5607049</text><text x="185.00" y="388.95" font-size="10.30" fill="#1a1a1a" text-anchor="end" textLength="55.24" lengthAdjust="spacingAndGlyphs" stroke="#1a1a1a" stroke-width="0.15">19-01-2018</text><text x="189.40" y="388.95" font-size="10.30" fill="#1a1a1a" textLength="79.23" lengthAdjust="spacingAndGlyphs" stroke="#1a1a1a" stroke-width="0.15">Blair Mccullough</text><text x="289.90" y="388.95" font-size="10.30" fill="#1a1a1a" textLength="23.42" lengthAdjust="spacingAndGlyphs" stroke="#1a1a1a" stroke-width="0.15">India</text><text x="361.40" y="388.95" font-size="10.30" fill="#1a1a1a" textLength="60.62" lengthAdjust="spacingAndGlyphs" stroke="#1a1a1a" stroke-width="0.15">Maharashtra</text><text x="487.40" y="388.95" font-size="10.30" fill="#1a1a1a" textLength="25.22" lengthAdjust="spacingAndGlyphs" stroke="#1a1a1a" stroke-width="0.15">Pune</text><text x="591.40" y="388.95" font-size="10.30" fill="#1a1a1a" textLength="28.22" lengthAdjust="spacingAndGlyphs" stroke="#1a1a1a" stroke-width="0.15">South</text><text x="683.10" y="388.95" font-size="10.30" fill="#1a1a1a" text-anchor="end" textLength="24.02" lengthAdjust="spacingAndGlyphs" stroke="#1a1a1a" stroke-width="0.15">3131</text><text x="734.70" y="388.95" font-size="10.30" fill="#1a1a1a" text-anchor="end" textLength="24.02" lengthAdjust="spacingAndGlyphs" stroke="#1a1a1a" stroke-width="0.15">2380</text><text x="17.20" y="404.48" font-size="10.30" fill="#448a5e" text-anchor="end" textLength="12.01" lengthAdjust="spacingAndGlyphs">63</text><text x="25.10" y="404.48" font-size="10.30" fill="#1a1a1a" textLength="86.47" lengthAdjust="spacingAndGlyphs" stroke="#1a1a1a" stroke-width="0.15">KL-2018-5607050</text><text x="185.00" y="404.48" font-size="10.30" fill="#1a1a1a" text-anchor="end" textLength="55.24" lengthAdjust="spacingAndGlyphs" stroke="#1a1a1a" stroke-width="0.15">20-01-2018</text><text x="189.40" y="404.48" font-size="10.30" fill="#1a1a1a" textLength="66.63" lengthAdjust="spacingAndGlyphs" stroke="#1a1a1a" stroke-width="0.15">Diana Guthrie</text><text x="289.90" y="404.48" font-size="10.30" fill="#1a1a1a" textLength="23.42" lengthAdjust="spacingAndGlyphs" stroke="#1a1a1a" stroke-width="0.15">India</text><text x="361.40" y="404.48" font-size="10.30" fill="#1a1a1a" textLength="60.62" lengthAdjust="spacingAndGlyphs" stroke="#1a1a1a" stroke-width="0.15">Maharashtra</text><text x="487.40" y="404.48" font-size="10.30" fill="#1a1a1a" textLength="25.22" lengthAdjust="spacingAndGlyphs" stroke="#1a1a1a" stroke-width="0.15">Pune</text><text x="591.40" y="404.48" font-size="10.30" fill="#1a1a1a" textLength="28.22" lengthAdjust="spacingAndGlyphs" stroke="#1a1a1a" stroke-width="0.15">South</text><text x="683.10" y="404.48" font-size="10.30" fill="#1a1a1a" text-anchor="end" textLength="24.02" lengthAdjust="spacingAndGlyphs" stroke="#1a1a1a" stroke-width="0.15">3825</text><text x="734.70" y="404.48" font-size="10.30" fill="#1a1a1a" text-anchor="end" textLength="24.02" lengthAdjust="spacingAndGlyphs" stroke="#1a1a1a" stroke-width="0.15">2333</text><text x="17.20" y="420.01" font-size="10.30" fill="#448a5e" text-anchor="end" textLength="12.01" lengthAdjust="spacingAndGlyphs">64</text><text x="25.10" y="420.01" font-size="10.30" fill="#1a1a1a" textLength="86.47" lengthAdjust="spacingAndGlyphs" stroke="#1a1a1a" stroke-width="0.15">KL-2018-5607051</text><text x="185.00" y="420.01" font-size="10.30" fill="#1a1a1a" text-anchor="end" textLength="55.24" lengthAdjust="spacingAndGlyphs" stroke="#1a1a1a" stroke-width="0.15">20-01-2018</text><text x="189.40" y="420.01" font-size="10.30" fill="#1a1a1a" textLength="67.23" lengthAdjust="spacingAndGlyphs" stroke="#1a1a1a" stroke-width="0.15">Neville Ashley</text><text x="289.90" y="420.01" font-size="10.30" fill="#1a1a1a" textLength="23.42" lengthAdjust="spacingAndGlyphs" stroke="#1a1a1a" stroke-width="0.15">India</text><text x="361.40" y="420.01" font-size="10.30" fill="#1a1a1a" textLength="60.62" lengthAdjust="spacingAndGlyphs" stroke="#1a1a1a" stroke-width="0.15">Maharashtra</text><text x="487.40" y="420.01" font-size="10.30" fill="#1a1a1a" textLength="25.22" lengthAdjust="spacingAndGlyphs" stroke="#1a1a1a" stroke-width="0.15">Pune</text><text x="591.40" y="420.01" font-size="10.30" fill="#1a1a1a" textLength="28.22" lengthAdjust="spacingAndGlyphs" stroke="#1a1a1a" stroke-width="0.15">South</text><text x="683.10" y="420.01" font-size="10.30" fill="#1a1a1a" text-anchor="end" textLength="24.02" lengthAdjust="spacingAndGlyphs" stroke="#1a1a1a" stroke-width="0.15">4362</text><text x="734.70" y="420.01" font-size="10.30" fill="#1a1a1a" text-anchor="end" textLength="24.02" lengthAdjust="spacingAndGlyphs" stroke="#1a1a1a" stroke-width="0.15">3446</text><text x="17.20" y="435.54" font-size="10.30" fill="#333" text-anchor="end" textLength="12.01" lengthAdjust="spacingAndGlyphs">65</text></svg>
<div style="position:absolute;left:841.70px;top:112.50px;width:12.30px;height:320.50px;background:#e2e3e1"></div>
<div style="position:absolute;left:841.40px;top:112.50px;width:0.80px;height:320.50px;background:#d0d0d0"></div>
<div style="position:absolute;left:844.40px;top:114.70px;width:8.10px;height:7.50px;background:#fff"></div>
<svg style="left:846.50px;top:117.30px" width="4" height="2.4" viewBox="0 0 4 2.4"><path d="M0 2.4 L2 0 L4 2.4 Z" fill="#555"/></svg>
<div style="position:absolute;left:844.40px;top:335.40px;width:8.10px;height:88.60px;background:#fff;border:0.6px solid #cfcfcf"></div>
<div style="position:absolute;left:844.40px;top:425.00px;width:8.10px;height:7.50px;background:#fff"></div>
<svg style="left:846.50px;top:427.60px" width="4" height="2.4" viewBox="0 0 4 2.4"><path d="M0 0 L2 2.4 L4 0 Z" fill="#555"/></svg>
<div style="position:absolute;left:0.00px;top:433.00px;width:854.00px;height:12.70px;background:#e4e4e4"></div>
<svg style="left:12.50px;top:436.50px" width="2.5" height="4" viewBox="0 0 2.5 4"><path d="M2 0.3 L0.5 2 L2 3.7" fill="none" stroke="#c0c0c0" stroke-width="0.8"/></svg>
<svg style="left:25.20px;top:436.50px" width="2.5" height="4" viewBox="0 0 2.5 4"><path d="M0.5 0.3 L2 2 L0.5 3.7" fill="none" stroke="#c0c0c0" stroke-width="0.8"/></svg>
<div style="position:absolute;left:167.20px;top:433.00px;width:50.60px;height:12.70px;background:#f0f0f0"></div>
<div style="position:absolute;left:45.55px;top:434.80px;width:0.70px;height:8.60px;background:#c2c2c2"></div>
<div style="position:absolute;left:80.65px;top:434.80px;width:0.70px;height:8.60px;background:#c2c2c2"></div>
<div style="position:absolute;left:116.15px;top:434.80px;width:0.70px;height:8.60px;background:#c2c2c2"></div>
<div style="position:absolute;left:247.45px;top:434.80px;width:0.70px;height:8.60px;background:#c2c2c2"></div>
<div style="position:absolute;left:293.45px;top:434.80px;width:0.70px;height:8.60px;background:#c2c2c2"></div>
<div style="position:absolute;left:407.85px;top:434.80px;width:0.70px;height:8.60px;background:#c2c2c2"></div>
<div style="position:absolute;left:474.95px;top:434.80px;width:0.70px;height:8.60px;background:#c2c2c2"></div>
<div style="position:absolute;left:544.75px;top:434.80px;width:0.70px;height:8.60px;background:#c2c2c2"></div>
<div style="position:absolute;left:167.20px;top:443.20px;width:50.60px;height:1.40px;background:#3a8a5a"></div>
<svg style="left:559.60px;top:435.00px" width="9.3" height="9.3" viewBox="0 0 9.3 9.3"><circle cx="4.65" cy="4.65" r="4.1" fill="none" stroke="#777" stroke-width="0.8"/><path d="M2.4 4.65 H6.9 M4.65 2.4 V6.9" stroke="#777" stroke-width="0.8"/></svg>
<div style="position:absolute;left:781.60px;top:436.50px;width:0.90px;height:0.90px;background:#999"></div>
<div style="position:absolute;left:781.60px;top:439.00px;width:0.90px;height:0.90px;background:#999"></div>
<div style="position:absolute;left:781.60px;top:441.50px;width:0.90px;height:0.90px;background:#999"></div>
<div style="position:absolute;left:790.40px;top:434.50px;width:6.20px;height:9.50px;background:#fff"></div>
<svg style="left:792.00px;top:437.50px" width="3" height="4" viewBox="0 0 3 4"><path d="M3 0 L0 2 L3 4 Z" fill="#444"/></svg>
<div style="position:absolute;left:798.00px;top:435.40px;width:32.30px;height:7.80px;background:#fff"></div>
<div style="position:absolute;left:834.40px;top:434.50px;width:7.90px;height:9.50px;background:#fff"></div>
<svg style="left:837.30px;top:437.50px" width="3" height="4" viewBox="0 0 3 4"><path d="M0 0 L3 2 L0 4 Z" fill="#444"/></svg>
<div style="position:absolute;left:0.00px;top:445.70px;width:854.00px;height:12.60px;background:#f0f0f0"></div>
<svg style="left:30.90px;top:448.50px" width="8.4" height="7.1" viewBox="0 0 8.4 7.1"><rect x="0" y="0" width="8.4" height="7.1" fill="#888"/><rect x="1" y="2" width="6.4" height="4.3" fill="#bbb"/><circle cx="4.2" cy="4.2" r="1.2" fill="#333"/></svg>
<div style="position:absolute;left:688.40px;top:445.70px;width:22.00px;height:12.60px;background:#d8d8d8"></div>
<svg style="left:695.50px;top:448.00px" width="7.5" height="8" viewBox="0 0 7.5 8"><rect x="0.4" y="0.4" width="6.7" height="7.2" fill="none" stroke="#555" stroke-width="0.8"/><path d="M0.4 2.8 H7.1 M0.4 5.2 H7.1 M2.6 0.4 V7.6 M4.9 0.4 V7.6" stroke="#555" stroke-width="0.6"/></svg>
<svg style="left:718.00px;top:448.00px" width="7.8" height="8" viewBox="0 0 7.8 8"><rect x="0.4" y="0.4" width="7" height="7.2" fill="none" stroke="#666" stroke-width="0.8"/><rect x="1.8" y="1.5" width="4.2" height="5" fill="#999"/></svg>
<svg style="left:739.50px;top:448.00px" width="8.5" height="8" viewBox="0 0 8.5 8"><rect x="0.4" y="0.4" width="7.7" height="7.2" fill="none" stroke="#666" stroke-width="0.8"/><path d="M0.4 4.5 H4.5 V0.4" fill="none" stroke="#666" stroke-width="0.8"/></svg>
<div style="position:absolute;left:758.60px;top:451.80px;width:4.40px;height:0.80px;background:#777"></div>
<div style="position:absolute;left:765.00px;top:451.90px;width:56.00px;height:0.60px;background:#bdbdbd"></div>
<div style="position:absolute;left:796.00px;top:448.80px;width:2.90px;height:6.60px;background:#555"></div>
<div style="position:absolute;left:823.20px;top:451.80px;width:4.10px;height:0.80px;background:#777"></div>
<div style="position:absolute;left:824.80px;top:450.20px;width:0.80px;height:4.00px;background:#777"></div>
<div style="position:absolute;left:0.00px;top:458.60px;width:854.00px;height:21.40px;background:#0f9ec6"></div>
<svg style="left:0;top:0" width="854" height="480" font-family="Liberation Sans"><text x="52.00" y="441.32" font-size="7.60" fill="#505050" textLength="22.00" lengthAdjust="spacingAndGlyphs" stroke="#505050" stroke-width="0.12">Sheet1</text><text x="87.00" y="441.32" font-size="7.60" fill="#505050" textLength="22.10" lengthAdjust="spacingAndGlyphs" stroke="#505050" stroke-width="0.12">Sheet2</text><text x="123.20" y="441.32" font-size="7.60" fill="#505050" textLength="36.80" lengthAdjust="spacingAndGlyphs" stroke="#505050" stroke-width="0.12">Pivot Table</text><text x="223.90" y="441.32" font-size="7.60" fill="#505050" textLength="17.00" lengthAdjust="spacingAndGlyphs" stroke="#505050" stroke-width="0.12">Slicer</text><text x="254.40" y="441.32" font-size="7.60" fill="#505050" textLength="31.40" lengthAdjust="spacingAndGlyphs" stroke="#505050" stroke-width="0.12">Time Line</text><text x="302.00" y="441.32" font-size="7.60" fill="#505050" textLength="96.80" lengthAdjust="spacingAndGlyphs" stroke="#505050" stroke-width="0.12">Grouping | Custom Grouping</text><text x="415.70" y="441.32" font-size="7.60" fill="#505050" textLength="52.00" lengthAdjust="spacingAndGlyphs" stroke="#505050" stroke-width="0.12">Calculated Field</text><text x="482.70" y="441.32" font-size="7.60" fill="#505050" textLength="55.20" lengthAdjust="spacingAndGlyphs" stroke="#505050" stroke-width="0.12">Calculated Items</text><text x="172.60" y="441.18" font-size="7.20" fill="#2a7a4a" font-weight="bold" textLength="38.70" lengthAdjust="spacingAndGlyphs">Pivot Chart</text><text x="4.60" y="454.56" font-size="6.60" fill="#505050" textLength="15.10" lengthAdjust="spacingAndGlyphs" stroke="#505050" stroke-width="0.12">Ready</text><text x="540.00" y="454.16" font-size="6.60" fill="#404040" textLength="55.50" lengthAdjust="spacingAndGlyphs" stroke="#404040" stroke-width="0.12">Average: 16151.38095</text><text x="605.70" y="454.16" font-size="6.60" fill="#404040" textLength="26.60" lengthAdjust="spacingAndGlyphs" stroke="#404040" stroke-width="0.12">Count: 576</text><text x="642.10" y="454.16" font-size="6.60" fill="#404040" textLength="34.60" lengthAdjust="spacingAndGlyphs" stroke="#404040" stroke-width="0.12">Sum: 3052611</text><text x="835.90" y="454.36" font-size="6.60" fill="#555" textLength="13.00" lengthAdjust="spacingAndGlyphs" stroke="#555" stroke-width="0.12">145%</text><text x="94.30" y="474.27" font-size="12.20" fill="#fff" font-weight="bold" textLength="665.80" lengthAdjust="spacingAndGlyphs" stroke="#fff" stroke-width="0.2">This Video is Created by Satish Dhawale (Founder of CoursePe – 7 Silver and 1 Gold&#160; Button Award winner From YouTube)</text></svg>
<div style="left:85.3px;top:4.6px;width:43px;height:43px;border-radius:50%;background:rgba(232,250,40,0.5)"></div>
<svg style="left:110.90px;top:24.60px" width="6.5" height="8" viewBox="0 0 6.5 8"><path d="M0.5 0.5 L0.5 7 L2.2 5.4 L3.5 7.8 L4.6 7.2 L3.4 4.9 L5.8 4.9 Z" fill="#fff" stroke="#222" stroke-width="0.6"/></svg>
<svg style="left:144.90px;top:12.90px" width="5" height="7" viewBox="0 0 5 7"><path d="M0.5 0.5 L0.5 6.5 L2 5 L3 7 L4 6.5 L3 4.5 L4.8 4.5 Z" fill="#fff" stroke="#444" stroke-width="0.4"/></svg>
</body></html>
